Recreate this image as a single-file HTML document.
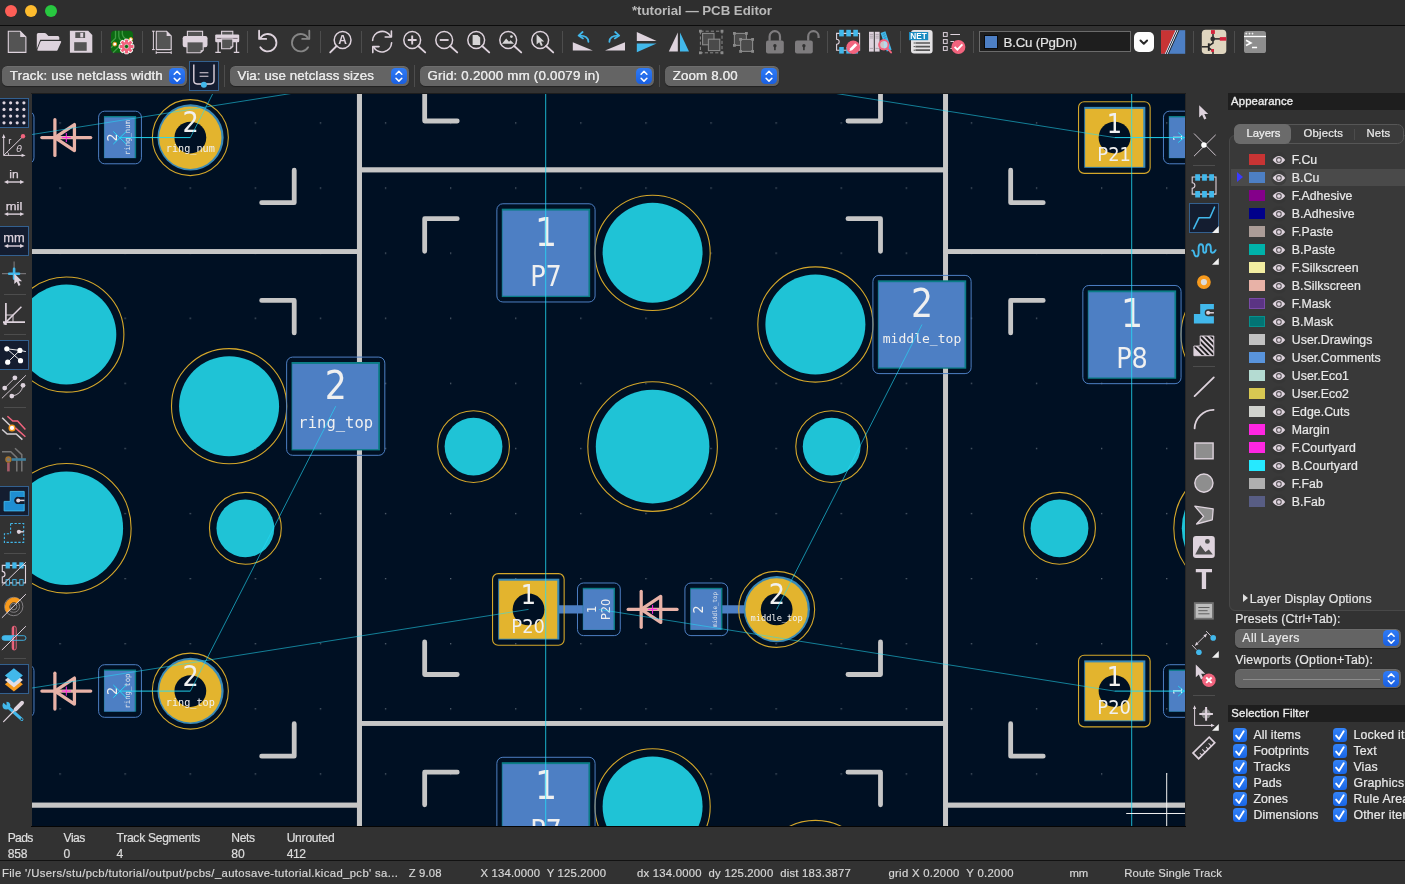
<!DOCTYPE html><html><head><meta charset="utf-8"><title>*tutorial — PCB Editor</title><style>

*{box-sizing:border-box;margin:0;padding:0}
html,body{width:1405px;height:884px;overflow:hidden;background:#323232}
body{position:relative;font-family:"Liberation Sans",sans-serif;-webkit-font-smoothing:antialiased}
.a{position:absolute}
.t{position:absolute;white-space:nowrap;line-height:1;-webkit-text-stroke:0.2px}
#w{position:absolute;left:0;top:0;width:1405px;height:884px;will-change:transform}
svg{position:absolute;overflow:hidden}
.cv{display:block}
.pn{font-family:"DejaVu Sans Condensed","DejaVu Sans","Liberation Sans",sans-serif;font-weight:400;font-stretch:condensed}
.pm{font-family:"DejaVu Sans Mono","Liberation Mono",monospace}
.dd{position:absolute;height:20px;border-radius:5.5px;background:#646464;box-shadow:inset 0 0.5px 0 rgba(255,255,255,.12),0 0.5px 1px rgba(0,0,0,.35)}
.st{position:absolute;width:16px;height:16px;border-radius:4.5px;background:linear-gradient(#2f7bf6,#1a5fe0)}
.sb{-webkit-text-stroke:0.35px}
.mb{-webkit-text-stroke:0.22px}
.sep{position:absolute;width:1px;background:#4d4d4d}
.hsep{position:absolute;height:1px;background:#4d4d4d}
.sel{position:absolute;border:1px solid #33608f;background:#141d30}
.cb{position:absolute;width:14px;height:14px;border-radius:3.5px;background:linear-gradient(#3483f7,#1966e6)}

</style></head><body><div id="w">
<div class="a" style="left:0px;top:0px;width:1405px;height:25px;background:#2e2e2e;"></div>
<div class="a" style="left:0px;top:25px;width:1405px;height:1px;background:#0c0c0c;"></div>
<div class="a" style="left:5px;top:5px;width:12px;height:12px;background:#fe5f57;border-radius:6px"></div>
<div class="a" style="left:25px;top:5px;width:12px;height:12px;background:#febc2e;border-radius:6px"></div>
<div class="a" style="left:45px;top:5px;width:12px;height:12px;background:#28c840;border-radius:6px"></div>
<span class="t " style="left:631.97px;top:3.74px;font-size:13.3px;color:#b9b9b9;font-weight:700;letter-spacing:-0.05px;-webkit-text-stroke:0;">*tutorial — PCB Editor</span>
<div class="a" style="left:0px;top:26px;width:1405px;height:67.6px;background:#323232;"></div>
<div class="sep" style="left:100.7px;top:31.2px;height:21.6px"></div>
<div class="sep" style="left:142.1px;top:31.2px;height:21.6px"></div>
<div class="sep" style="left:246.7px;top:31.2px;height:21.6px"></div>
<div class="sep" style="left:319.8px;top:31.2px;height:21.6px"></div>
<div class="sep" style="left:361px;top:31.2px;height:21.6px"></div>
<div class="sep" style="left:561.8px;top:31.2px;height:21.6px"></div>
<div class="sep" style="left:827px;top:31.2px;height:21.6px"></div>
<div class="sep" style="left:900px;top:31.2px;height:21.6px"></div>
<div class="sep" style="left:973px;top:31.2px;height:21.6px"></div>
<div class="sep" style="left:1193.3px;top:31.2px;height:21.6px"></div>
<div class="sep" style="left:1234.1px;top:31.2px;height:21.6px"></div>
<div class="a" style="left:979px;top:31.4px;width:152px;height:21px;background:#1e1e1e;border:1px solid #6b6b6b"></div>
<div class="a" style="left:984px;top:35.4px;width:14px;height:13.6px;background:#4d7fc4;border:1px solid #0a0a0a"></div>
<span class="t " style="left:1003.47px;top:35.94px;font-size:13.3px;color:#e4e4e4;font-weight:400;letter-spacing:-0.2px;">B.Cu (PgDn)</span>
<div class="a" style="left:1134px;top:32px;width:20px;height:20px;background:#fdfdfd;border-radius:5px"></div>
<div class="dd" style="left:2px;top:66.2px;width:185px"></div>
<div class="st" style="left:169px;top:68.2px"></div>
<span class="t " style="left:9.87px;top:69.04px;font-size:13.3px;color:#e6e6e6;font-weight:400;letter-spacing:0.17px;text-shadow:0 0 0.4px #e6e6e6;">Track: use netclass width</span>
<div class="dd" style="left:230px;top:66.2px;width:178.9px"></div>
<div class="st" style="left:390.9px;top:68.2px"></div>
<span class="t " style="left:237.57px;top:69.04px;font-size:13.3px;color:#e6e6e6;font-weight:400;letter-spacing:0.09px;text-shadow:0 0 0.4px #e6e6e6;">Via: use netclass sizes</span>
<div class="dd" style="left:420px;top:66.2px;width:233.8px"></div>
<div class="st" style="left:635.8px;top:68.2px"></div>
<span class="t " style="left:427.47px;top:69.04px;font-size:13.3px;color:#e6e6e6;font-weight:400;letter-spacing:0.23px;text-shadow:0 0 0.4px #e6e6e6;">Grid: 0.2000 mm (0.0079 in)</span>
<div class="dd" style="left:665px;top:66.2px;width:113.7px"></div>
<div class="st" style="left:760.7px;top:68.2px"></div>
<span class="t " style="left:672.67px;top:69.04px;font-size:13.3px;color:#e6e6e6;font-weight:400;letter-spacing:0.18px;text-shadow:0 0 0.4px #e6e6e6;">Zoom 8.00</span>
<div class="sep" style="left:223.9px;top:65px;height:22px"></div>
<div class="sep" style="left:414.2px;top:65px;height:22px"></div>
<div class="sep" style="left:659.2px;top:65px;height:22px"></div>
<div class="sel" style="left:189.3px;top:61px;width:29.8px;height:29.6px"></div>
<div class="a" style="left:31px;top:92.8px;width:1154.5px;height:1.4px;background:#1d1d1d;"></div>
<div class="a" style="left:0px;top:93.6px;width:32px;height:733px;background:#323232;"></div>
<div class="sel" style="left:-1px;top:98.4px;width:29.9px;height:29.5px"></div>
<div class="sel" style="left:-1px;top:226.3px;width:29.9px;height:29.5px"></div>
<div class="sel" style="left:-1px;top:340.1px;width:29.9px;height:29.7px"></div>
<div class="sel" style="left:-1px;top:486.4px;width:29.9px;height:29.9px"></div>
<div class="sel" style="left:-1px;top:664.1px;width:29.9px;height:29.7px"></div>
<div class="hsep" style="left:4px;top:293.5px;width:22px"></div>
<div class="hsep" style="left:4px;top:333.5px;width:22px"></div>
<div class="hsep" style="left:4px;top:406.5px;width:22px"></div>
<div class="hsep" style="left:4px;top:553px;width:22px"></div>
<div class="hsep" style="left:4px;top:658px;width:22px"></div>
<div class="a" style="left:1185px;top:93.6px;width:220px;height:733px;background:#323232;"></div>
<div class="a" style="left:1185px;top:93.6px;width:1.2px;height:733px;background:#262626;"></div>
<div class="sel" style="left:1189.2px;top:203px;width:29.8px;height:30px"></div>
<div class="hsep" style="left:1193px;top:165px;width:22px"></div>
<div class="hsep" style="left:1193px;top:366px;width:22px"></div>
<div class="hsep" style="left:1193px;top:695px;width:22px"></div>
<div class="a" style="left:1228.4px;top:93.6px;width:177px;height:733px;background:#323232;"></div>
<div class="a" style="left:1228.4px;top:93.2px;width:177px;height:16.6px;background:#1e1e1e;"></div>
<span class="t sb" style="left:1231.11px;top:96.23px;font-size:11.3px;color:#ececec;font-weight:400;letter-spacing:0.11px;">Appearance</span>
<div class="a" style="left:1228.9px;top:134.5px;width:190px;height:476px;background:#393939;border:1px solid #484848;border-radius:6px"></div>
<div class="a" style="left:1233.7px;top:123.6px;width:170px;height:20.8px;background:#3b3b3b;border:1px solid #565656;border-radius:6.5px"></div>
<div class="a" style="left:1234.2px;top:124px;width:56.8px;height:20px;background:#6b6b6b;border-radius:6px"></div>
<div class="a" style="left:1354px;top:128.5px;width:1px;height:11.5px;background:#4c4c4c;"></div>
<span class="t mb" style="left:1246.41px;top:128.43px;font-size:11.3px;color:#f0f0f0;font-weight:400;letter-spacing:0.01px;">Layers</span>
<span class="t mb" style="left:1303.51px;top:128.43px;font-size:11.3px;color:#e8e8e8;font-weight:400;letter-spacing:0.2px;">Objects</span>
<span class="t mb" style="left:1366.41px;top:128.43px;font-size:11.3px;color:#e8e8e8;font-weight:400;letter-spacing:0.19px;">Nets</span>
<div class="a" style="left:1231px;top:169px;width:174px;height:16.6px;background:#4a4a4a;"></div>
<div class="a" style="left:1237px;top:172.2px;width:0;height:0;border-left:6.5px solid #3a3aff;border-top:5.3px solid transparent;border-bottom:5.3px solid transparent"></div>
<div class="a" style="left:1249.2px;top:154.4px;width:15.8px;height:11px;background:#c83434;"></div>
<span class="t mb" style="left:1291.74px;top:153.79px;font-size:12.3px;color:#e8e8e8;font-weight:400;letter-spacing:0.06px;">F.Cu</span>
<div class="a" style="left:1249.2px;top:172.4px;width:15.8px;height:11px;background:#4d7fc4;"></div>
<span class="t mb" style="left:1291.74px;top:171.79px;font-size:12.3px;color:#e8e8e8;font-weight:400;letter-spacing:0.07px;">B.Cu</span>
<div class="a" style="left:1249.2px;top:190.4px;width:15.8px;height:11px;background:#84008a;"></div>
<span class="t mb" style="left:1291.74px;top:189.79px;font-size:12.3px;color:#e8e8e8;font-weight:400;letter-spacing:0.06px;">F.Adhesive</span>
<div class="a" style="left:1249.2px;top:208.4px;width:15.8px;height:11px;background:#00008a;"></div>
<span class="t mb" style="left:1291.74px;top:207.79px;font-size:12.3px;color:#e8e8e8;font-weight:400;letter-spacing:0.06px;">B.Adhesive</span>
<div class="a" style="left:1249.2px;top:226.4px;width:15.8px;height:11px;background:#ab9c97;"></div>
<span class="t mb" style="left:1291.74px;top:225.79px;font-size:12.3px;color:#e8e8e8;font-weight:400;letter-spacing:0.06px;">F.Paste</span>
<div class="a" style="left:1249.2px;top:244.4px;width:15.8px;height:11px;background:#00b2aa;"></div>
<span class="t mb" style="left:1291.74px;top:243.79px;font-size:12.3px;color:#e8e8e8;font-weight:400;letter-spacing:0.06px;">B.Paste</span>
<div class="a" style="left:1249.2px;top:262.4px;width:15.8px;height:11px;background:#f2eda1;"></div>
<span class="t mb" style="left:1291.74px;top:261.79px;font-size:12.3px;color:#e8e8e8;font-weight:400;letter-spacing:0.05px;">F.Silkscreen</span>
<div class="a" style="left:1249.2px;top:280.4px;width:15.8px;height:11px;background:#e8b2a7;"></div>
<span class="t mb" style="left:1291.74px;top:279.79px;font-size:12.3px;color:#e8e8e8;font-weight:400;letter-spacing:0.06px;">B.Silkscreen</span>
<div class="a" style="left:1249.2px;top:298.4px;width:15.8px;height:11px;background:#5b3484;border:1px solid #7a4aa8"></div>
<span class="t mb" style="left:1291.74px;top:297.79px;font-size:12.3px;color:#e8e8e8;font-weight:400;letter-spacing:0.06px;">F.Mask</span>
<div class="a" style="left:1249.2px;top:316.4px;width:15.8px;height:11px;background:#027474;border:1px solid #06908c"></div>
<span class="t mb" style="left:1291.74px;top:315.79px;font-size:12.3px;color:#e8e8e8;font-weight:400;letter-spacing:0.07px;">B.Mask</span>
<div class="a" style="left:1249.2px;top:334.4px;width:15.8px;height:11px;background:#c2c2c2;"></div>
<span class="t mb" style="left:1291.74px;top:333.79px;font-size:12.3px;color:#e8e8e8;font-weight:400;letter-spacing:0.06px;">User.Drawings</span>
<div class="a" style="left:1249.2px;top:352.4px;width:15.8px;height:11px;background:#5994dc;"></div>
<span class="t mb" style="left:1291.74px;top:351.79px;font-size:12.3px;color:#e8e8e8;font-weight:400;letter-spacing:0.07px;">User.Comments</span>
<div class="a" style="left:1249.2px;top:370.4px;width:15.8px;height:11px;background:#b4dbd2;"></div>
<span class="t mb" style="left:1291.74px;top:369.79px;font-size:12.3px;color:#e8e8e8;font-weight:400;letter-spacing:0.06px;">User.Eco1</span>
<div class="a" style="left:1249.2px;top:388.4px;width:15.8px;height:11px;background:#d8c852;"></div>
<span class="t mb" style="left:1291.74px;top:387.79px;font-size:12.3px;color:#e8e8e8;font-weight:400;letter-spacing:0.06px;">User.Eco2</span>
<div class="a" style="left:1249.2px;top:406.4px;width:15.8px;height:11px;background:#d0d2cd;"></div>
<span class="t mb" style="left:1291.74px;top:405.79px;font-size:12.3px;color:#e8e8e8;font-weight:400;letter-spacing:0.06px;">Edge.Cuts</span>
<div class="a" style="left:1249.2px;top:424.4px;width:15.8px;height:11px;background:#ff26e2;"></div>
<span class="t mb" style="left:1291.74px;top:423.79px;font-size:12.3px;color:#e8e8e8;font-weight:400;letter-spacing:0.06px;">Margin</span>
<div class="a" style="left:1249.2px;top:442.4px;width:15.8px;height:11px;background:#ff26e2;"></div>
<span class="t mb" style="left:1291.74px;top:441.79px;font-size:12.3px;color:#e8e8e8;font-weight:400;letter-spacing:0.06px;">F.Courtyard</span>
<div class="a" style="left:1249.2px;top:460.4px;width:15.8px;height:11px;background:#26e9ff;"></div>
<span class="t mb" style="left:1291.74px;top:459.79px;font-size:12.3px;color:#e8e8e8;font-weight:400;letter-spacing:0.06px;">B.Courtyard</span>
<div class="a" style="left:1249.2px;top:478.4px;width:15.8px;height:11px;background:#afafaf;"></div>
<span class="t mb" style="left:1291.74px;top:477.79px;font-size:12.3px;color:#e8e8e8;font-weight:400;letter-spacing:0.06px;">F.Fab</span>
<div class="a" style="left:1249.2px;top:496.4px;width:15.8px;height:11px;background:#585d84;"></div>
<span class="t mb" style="left:1291.74px;top:495.79px;font-size:12.3px;color:#e8e8e8;font-weight:400;letter-spacing:0.06px;">B.Fab</span>
<div class="a" style="left:1243.4px;top:594.3px;width:0;height:0;border-left:5px solid #e0e0e0;border-top:4.2px solid transparent;border-bottom:4.2px solid transparent"></div>
<span class="t " style="left:1249.74px;top:593.39px;font-size:12.3px;color:#e6e6e6;font-weight:400;letter-spacing:0.08px;">Layer Display Options</span>
<span class="t " style="left:1235.14px;top:613.19px;font-size:12.3px;color:#e6e6e6;font-weight:400;letter-spacing:0.14px;">Presets (Ctrl+Tab):</span>
<div class="dd" style="left:1235.3px;top:628.6px;width:165.4px;height:19px"></div>
<div class="st" style="left:1383.2px;top:630.2px"></div>
<span class="t " style="left:1242.34px;top:631.99px;font-size:12.3px;color:#e8e8e8;font-weight:400;letter-spacing:0.35px;">All Layers</span>
<span class="t " style="left:1235.14px;top:654.39px;font-size:12.3px;color:#e6e6e6;font-weight:400;letter-spacing:0.26px;">Viewports (Option+Tab):</span>
<div class="dd" style="left:1235.3px;top:669.2px;width:165.4px;height:19px"></div>
<div class="st" style="left:1383.2px;top:670.8px"></div>
<div class="a" style="left:1243px;top:678.6px;width:136.5px;height:1px;background:#8c8c8c;"></div>
<div class="a" style="left:1228.4px;top:705.2px;width:177px;height:16.6px;background:#1e1e1e;"></div>
<span class="t sb" style="left:1231.21px;top:708.03px;font-size:11.3px;color:#ececec;font-weight:400;letter-spacing:0.2px;">Selection Filter</span>
<div class="cb" style="left:1233.1px;top:728px"></div>
<div class="cb" style="left:1333.1px;top:728px"></div>
<span class="t mb" style="left:1253.44px;top:728.69px;font-size:12.3px;color:#e8e8e8;font-weight:400;letter-spacing:0.08px;">All items</span>
<span class="t mb" style="left:1353.44px;top:728.69px;font-size:12.3px;color:#e8e8e8;font-weight:400;letter-spacing:0.21px;">Locked items</span>
<div class="cb" style="left:1233.1px;top:744px"></div>
<div class="cb" style="left:1333.1px;top:744px"></div>
<span class="t mb" style="left:1253.44px;top:744.69px;font-size:12.3px;color:#e8e8e8;font-weight:400;letter-spacing:0.08px;">Footprints</span>
<span class="t mb" style="left:1353.44px;top:744.69px;font-size:12.3px;color:#e8e8e8;font-weight:400;letter-spacing:0.19px;">Text</span>
<div class="cb" style="left:1233.1px;top:760px"></div>
<div class="cb" style="left:1333.1px;top:760px"></div>
<span class="t mb" style="left:1253.44px;top:760.69px;font-size:12.3px;color:#e8e8e8;font-weight:400;letter-spacing:0.09px;">Tracks</span>
<span class="t mb" style="left:1353.44px;top:760.69px;font-size:12.3px;color:#e8e8e8;font-weight:400;letter-spacing:0.2px;">Vias</span>
<div class="cb" style="left:1233.1px;top:776px"></div>
<div class="cb" style="left:1333.1px;top:776px"></div>
<span class="t mb" style="left:1253.44px;top:776.69px;font-size:12.3px;color:#e8e8e8;font-weight:400;letter-spacing:0.1px;">Pads</span>
<span class="t mb" style="left:1353.44px;top:776.69px;font-size:12.3px;color:#e8e8e8;font-weight:400;letter-spacing:0.21px;">Graphics</span>
<div class="cb" style="left:1233.1px;top:792px"></div>
<div class="cb" style="left:1333.1px;top:792px"></div>
<span class="t mb" style="left:1253.44px;top:792.69px;font-size:12.3px;color:#e8e8e8;font-weight:400;letter-spacing:0.1px;">Zones</span>
<span class="t mb" style="left:1353.44px;top:792.69px;font-size:12.3px;color:#e8e8e8;font-weight:400;letter-spacing:0.21px;">Rule Areas</span>
<div class="cb" style="left:1233.1px;top:808px"></div>
<div class="cb" style="left:1333.1px;top:808px"></div>
<span class="t mb" style="left:1253.44px;top:808.69px;font-size:12.3px;color:#e8e8e8;font-weight:400;letter-spacing:0.09px;">Dimensions</span>
<span class="t mb" style="left:1353.44px;top:808.69px;font-size:12.3px;color:#e8e8e8;font-weight:400;letter-spacing:0.2px;">Other items</span>
<div class="a" style="left:0px;top:826px;width:1405px;height:58px;background:#323232;"></div>
<div class="a" style="left:31px;top:826px;width:1154.5px;height:1.2px;background:#050505;"></div>
<div class="a" style="left:0px;top:860px;width:1405px;height:1.2px;background:#121212;"></div>
<div class="a" style="left:0px;top:861.2px;width:1405px;height:22.8px;background:#323232;"></div>
<span class="t " style="left:7.65px;top:832.16px;font-size:12.1px;color:#dedede;font-weight:400;letter-spacing:-0.64px;">Pads</span>
<span class="t " style="left:7.65px;top:847.76px;font-size:12.1px;color:#dedede;font-weight:400;letter-spacing:-0.2px;">858</span>
<span class="t " style="left:63.55px;top:832.16px;font-size:12.1px;color:#dedede;font-weight:400;letter-spacing:-0.48px;">Vias</span>
<span class="t " style="left:63.55px;top:847.76px;font-size:12.1px;color:#dedede;font-weight:400;letter-spacing:-0.53px;">0</span>
<span class="t " style="left:116.55px;top:832.16px;font-size:12.1px;color:#dedede;font-weight:400;letter-spacing:-0.29px;">Track Segments</span>
<span class="t " style="left:116.55px;top:847.76px;font-size:12.1px;color:#dedede;font-weight:400;letter-spacing:-0.43px;">4</span>
<span class="t " style="left:231.35px;top:832.16px;font-size:12.1px;color:#dedede;font-weight:400;letter-spacing:-0.37px;">Nets</span>
<span class="t " style="left:231.35px;top:847.76px;font-size:12.1px;color:#dedede;font-weight:400;letter-spacing:-0.03px;">80</span>
<span class="t " style="left:286.65px;top:832.16px;font-size:12.1px;color:#dedede;font-weight:400;letter-spacing:-0.25px;">Unrouted</span>
<span class="t " style="left:286.65px;top:847.76px;font-size:12.1px;color:#dedede;font-weight:400;letter-spacing:-0.43px;">412</span>
<span class="t " style="left:1.91px;top:868.43px;font-size:11.3px;color:#d6d6d6;font-weight:400;letter-spacing:0.37px;white-space:pre;">File '/Users/stu/pcb/tutorial/output/pcbs/_autosave-tutorial.kicad_pcb' sa...</span>
<span class="t " style="left:408.81px;top:868.43px;font-size:11.3px;color:#d6d6d6;font-weight:400;letter-spacing:0.14px;white-space:pre;">Z 9.08</span>
<span class="t " style="left:480.51px;top:868.43px;font-size:11.3px;color:#d6d6d6;font-weight:400;letter-spacing:0.19px;white-space:pre;">X 134.0000  Y 125.2000</span>
<span class="t " style="left:637.01px;top:868.43px;font-size:11.3px;color:#d6d6d6;font-weight:400;letter-spacing:0.24px;white-space:pre;">dx 134.0000  dy 125.2000  dist 183.3877</span>
<span class="t " style="left:888.41px;top:868.43px;font-size:11.3px;color:#d6d6d6;font-weight:400;letter-spacing:0.31px;white-space:pre;">grid X 0.2000  Y 0.2000</span>
<span class="t " style="left:1069.51px;top:868.43px;font-size:11.3px;color:#d6d6d6;font-weight:400;letter-spacing:-0.11px;white-space:pre;">mm</span>
<span class="t " style="left:1124.21px;top:868.43px;font-size:11.3px;color:#d6d6d6;font-weight:400;letter-spacing:0.13px;white-space:pre;">Route Single Track</span>
<svg class="cv" style="left:31.8px;top:94px" width="1153.2" height="732" viewBox="31.8 94 1153.2 732">
<defs><pattern id="gd" x="59.2" y="57.2" width="65.1" height="65.1" patternUnits="userSpaceOnUse"><rect x="0" y="0" width="1.3" height="1.3" fill="#566270"/></pattern></defs>
<rect x="0" y="0" width="1405" height="884" fill="#001023"/>
<rect x="0" y="0" width="1405" height="884" fill="url(#gd)"/>
<g fill="none" stroke="#c6c6c6" stroke-width="4.8" stroke-linecap="round" stroke-linejoin="round">
<rect x="-226.94" y="-301.98" width="586.08" height="553.52"/>
<path d="M-129.26 -253.14L-161.82 -253.14L-161.82 -220.58"/>
<path d="M-129.26 202.7L-161.82 202.7L-161.82 170.14"/>
<path d="M261.46 -253.14L294.02 -253.14L294.02 -220.58"/>
<path d="M261.46 202.7L294.02 202.7L294.02 170.14"/>
<rect x="-226.94" y="251.54" width="586.08" height="553.52"/>
<path d="M-129.26 300.38L-161.82 300.38L-161.82 332.94"/>
<path d="M-129.26 756.22L-161.82 756.22L-161.82 723.66"/>
<path d="M261.46 300.38L294.02 300.38L294.02 332.94"/>
<path d="M261.46 756.22L294.02 756.22L294.02 723.66"/>
<rect x="-226.94" y="805.06" width="586.08" height="553.52"/>
<path d="M-129.26 853.9L-161.82 853.9L-161.82 886.46"/>
<path d="M-129.26 1309.74L-161.82 1309.74L-161.82 1277.18"/>
<path d="M261.46 853.9L294.02 853.9L294.02 886.46"/>
<path d="M261.46 1309.74L294.02 1309.74L294.02 1277.18"/>
<rect x="359.36" y="-383.68" width="586.08" height="553.52"/>
<path d="M457.04 -334.84L424.48 -334.84L424.48 -302.28"/>
<path d="M457.04 121L424.48 121L424.48 88.44"/>
<path d="M847.76 -334.84L880.32 -334.84L880.32 -302.28"/>
<path d="M847.76 121L880.32 121L880.32 88.44"/>
<rect x="359.36" y="169.84" width="586.08" height="553.52"/>
<path d="M457.04 218.68L424.48 218.68L424.48 251.24"/>
<path d="M457.04 674.52L424.48 674.52L424.48 641.96"/>
<path d="M847.76 218.68L880.32 218.68L880.32 251.24"/>
<path d="M847.76 674.52L880.32 674.52L880.32 641.96"/>
<rect x="359.36" y="723.36" width="586.08" height="553.52"/>
<path d="M457.04 772.2L424.48 772.2L424.48 804.76"/>
<path d="M457.04 1228.04L424.48 1228.04L424.48 1195.48"/>
<path d="M847.76 772.2L880.32 772.2L880.32 804.76"/>
<path d="M847.76 1228.04L880.32 1228.04L880.32 1195.48"/>
<rect x="945.36" y="-301.98" width="586.08" height="553.52"/>
<path d="M1043.04 -253.14L1010.48 -253.14L1010.48 -220.58"/>
<path d="M1043.04 202.7L1010.48 202.7L1010.48 170.14"/>
<path d="M1433.76 -253.14L1466.32 -253.14L1466.32 -220.58"/>
<path d="M1433.76 202.7L1466.32 202.7L1466.32 170.14"/>
<rect x="945.36" y="251.54" width="586.08" height="553.52"/>
<path d="M1043.04 300.38L1010.48 300.38L1010.48 332.94"/>
<path d="M1043.04 756.22L1010.48 756.22L1010.48 723.66"/>
<path d="M1433.76 300.38L1466.32 300.38L1466.32 332.94"/>
<path d="M1433.76 756.22L1466.32 756.22L1466.32 723.66"/>
<rect x="945.36" y="805.06" width="586.08" height="553.52"/>
<path d="M1043.04 853.9L1010.48 853.9L1010.48 886.46"/>
<path d="M1043.04 1309.74L1010.48 1309.74L1010.48 1277.18"/>
<path d="M1433.76 853.9L1466.32 853.9L1466.32 886.46"/>
<path d="M1433.76 1309.74L1466.32 1309.74L1466.32 1277.18"/>
</g>
<circle cx="66.1" cy="-25.22" r="56.8" fill="#1fc3d6"/><circle cx="66.1" cy="-25.22" r="64.8" fill="none" stroke="#d4a72a" stroke-width="1.1"/>
<circle cx="-112.98" cy="-25.22" r="28.9" fill="#1fc3d6"/><circle cx="-112.98" cy="-25.22" r="35.9" fill="none" stroke="#d4a72a" stroke-width="1.1"/>
<circle cx="245.18" cy="-25.22" r="28.9" fill="#1fc3d6"/><circle cx="245.18" cy="-25.22" r="35.9" fill="none" stroke="#d4a72a" stroke-width="1.1"/>
<circle cx="66.1" cy="-218.95" r="50" fill="#1fc3d6"/><circle cx="66.1" cy="-218.95" r="57.6" fill="none" stroke="#d4a72a" stroke-width="1.1"/>
<circle cx="228.9" cy="-147.32" r="50" fill="#1fc3d6"/><circle cx="228.9" cy="-147.32" r="57.6" fill="none" stroke="#d4a72a" stroke-width="1.1"/>
<circle cx="66.1" cy="528.3" r="56.8" fill="#1fc3d6"/><circle cx="66.1" cy="528.3" r="64.8" fill="none" stroke="#d4a72a" stroke-width="1.1"/>
<circle cx="-112.98" cy="528.3" r="28.9" fill="#1fc3d6"/><circle cx="-112.98" cy="528.3" r="35.9" fill="none" stroke="#d4a72a" stroke-width="1.1"/>
<circle cx="245.18" cy="528.3" r="28.9" fill="#1fc3d6"/><circle cx="245.18" cy="528.3" r="35.9" fill="none" stroke="#d4a72a" stroke-width="1.1"/>
<circle cx="66.1" cy="334.57" r="50" fill="#1fc3d6"/><circle cx="66.1" cy="334.57" r="57.6" fill="none" stroke="#d4a72a" stroke-width="1.1"/>
<circle cx="228.9" cy="406.2" r="50" fill="#1fc3d6"/><circle cx="228.9" cy="406.2" r="57.6" fill="none" stroke="#d4a72a" stroke-width="1.1"/>
<circle cx="66.1" cy="1081.82" r="56.8" fill="#1fc3d6"/><circle cx="66.1" cy="1081.82" r="64.8" fill="none" stroke="#d4a72a" stroke-width="1.1"/>
<circle cx="-112.98" cy="1081.82" r="28.9" fill="#1fc3d6"/><circle cx="-112.98" cy="1081.82" r="35.9" fill="none" stroke="#d4a72a" stroke-width="1.1"/>
<circle cx="245.18" cy="1081.82" r="28.9" fill="#1fc3d6"/><circle cx="245.18" cy="1081.82" r="35.9" fill="none" stroke="#d4a72a" stroke-width="1.1"/>
<circle cx="66.1" cy="888.09" r="50" fill="#1fc3d6"/><circle cx="66.1" cy="888.09" r="57.6" fill="none" stroke="#d4a72a" stroke-width="1.1"/>
<circle cx="228.9" cy="959.72" r="50" fill="#1fc3d6"/><circle cx="228.9" cy="959.72" r="57.6" fill="none" stroke="#d4a72a" stroke-width="1.1"/>
<circle cx="652.4" cy="-106.92" r="56.8" fill="#1fc3d6"/><circle cx="652.4" cy="-106.92" r="64.8" fill="none" stroke="#d4a72a" stroke-width="1.1"/>
<circle cx="473.32" cy="-106.92" r="28.9" fill="#1fc3d6"/><circle cx="473.32" cy="-106.92" r="35.9" fill="none" stroke="#d4a72a" stroke-width="1.1"/>
<circle cx="831.48" cy="-106.92" r="28.9" fill="#1fc3d6"/><circle cx="831.48" cy="-106.92" r="35.9" fill="none" stroke="#d4a72a" stroke-width="1.1"/>
<circle cx="652.4" cy="-300.65" r="50" fill="#1fc3d6"/><circle cx="652.4" cy="-300.65" r="57.6" fill="none" stroke="#d4a72a" stroke-width="1.1"/>
<circle cx="815.2" cy="-229.02" r="50" fill="#1fc3d6"/><circle cx="815.2" cy="-229.02" r="57.6" fill="none" stroke="#d4a72a" stroke-width="1.1"/>
<circle cx="652.4" cy="446.6" r="56.8" fill="#1fc3d6"/><circle cx="652.4" cy="446.6" r="64.8" fill="none" stroke="#d4a72a" stroke-width="1.1"/>
<circle cx="473.32" cy="446.6" r="28.9" fill="#1fc3d6"/><circle cx="473.32" cy="446.6" r="35.9" fill="none" stroke="#d4a72a" stroke-width="1.1"/>
<circle cx="831.48" cy="446.6" r="28.9" fill="#1fc3d6"/><circle cx="831.48" cy="446.6" r="35.9" fill="none" stroke="#d4a72a" stroke-width="1.1"/>
<circle cx="652.4" cy="252.87" r="50" fill="#1fc3d6"/><circle cx="652.4" cy="252.87" r="57.6" fill="none" stroke="#d4a72a" stroke-width="1.1"/>
<circle cx="815.2" cy="324.5" r="50" fill="#1fc3d6"/><circle cx="815.2" cy="324.5" r="57.6" fill="none" stroke="#d4a72a" stroke-width="1.1"/>
<circle cx="652.4" cy="1000.12" r="56.8" fill="#1fc3d6"/><circle cx="652.4" cy="1000.12" r="64.8" fill="none" stroke="#d4a72a" stroke-width="1.1"/>
<circle cx="473.32" cy="1000.12" r="28.9" fill="#1fc3d6"/><circle cx="473.32" cy="1000.12" r="35.9" fill="none" stroke="#d4a72a" stroke-width="1.1"/>
<circle cx="831.48" cy="1000.12" r="28.9" fill="#1fc3d6"/><circle cx="831.48" cy="1000.12" r="35.9" fill="none" stroke="#d4a72a" stroke-width="1.1"/>
<circle cx="652.4" cy="806.39" r="50" fill="#1fc3d6"/><circle cx="652.4" cy="806.39" r="57.6" fill="none" stroke="#d4a72a" stroke-width="1.1"/>
<circle cx="815.2" cy="878.02" r="50" fill="#1fc3d6"/><circle cx="815.2" cy="878.02" r="57.6" fill="none" stroke="#d4a72a" stroke-width="1.1"/>
<circle cx="1238.4" cy="-25.22" r="56.8" fill="#1fc3d6"/><circle cx="1238.4" cy="-25.22" r="64.8" fill="none" stroke="#d4a72a" stroke-width="1.1"/>
<circle cx="1059.32" cy="-25.22" r="28.9" fill="#1fc3d6"/><circle cx="1059.32" cy="-25.22" r="35.9" fill="none" stroke="#d4a72a" stroke-width="1.1"/>
<circle cx="1417.48" cy="-25.22" r="28.9" fill="#1fc3d6"/><circle cx="1417.48" cy="-25.22" r="35.9" fill="none" stroke="#d4a72a" stroke-width="1.1"/>
<circle cx="1238.4" cy="-218.95" r="50" fill="#1fc3d6"/><circle cx="1238.4" cy="-218.95" r="57.6" fill="none" stroke="#d4a72a" stroke-width="1.1"/>
<circle cx="1401.2" cy="-147.32" r="50" fill="#1fc3d6"/><circle cx="1401.2" cy="-147.32" r="57.6" fill="none" stroke="#d4a72a" stroke-width="1.1"/>
<circle cx="1238.4" cy="528.3" r="56.8" fill="#1fc3d6"/><circle cx="1238.4" cy="528.3" r="64.8" fill="none" stroke="#d4a72a" stroke-width="1.1"/>
<circle cx="1059.32" cy="528.3" r="28.9" fill="#1fc3d6"/><circle cx="1059.32" cy="528.3" r="35.9" fill="none" stroke="#d4a72a" stroke-width="1.1"/>
<circle cx="1417.48" cy="528.3" r="28.9" fill="#1fc3d6"/><circle cx="1417.48" cy="528.3" r="35.9" fill="none" stroke="#d4a72a" stroke-width="1.1"/>
<circle cx="1238.4" cy="334.57" r="50" fill="#1fc3d6"/><circle cx="1238.4" cy="334.57" r="57.6" fill="none" stroke="#d4a72a" stroke-width="1.1"/>
<circle cx="1401.2" cy="406.2" r="50" fill="#1fc3d6"/><circle cx="1401.2" cy="406.2" r="57.6" fill="none" stroke="#d4a72a" stroke-width="1.1"/>
<circle cx="1238.4" cy="1081.82" r="56.8" fill="#1fc3d6"/><circle cx="1238.4" cy="1081.82" r="64.8" fill="none" stroke="#d4a72a" stroke-width="1.1"/>
<circle cx="1059.32" cy="1081.82" r="28.9" fill="#1fc3d6"/><circle cx="1059.32" cy="1081.82" r="35.9" fill="none" stroke="#d4a72a" stroke-width="1.1"/>
<circle cx="1417.48" cy="1081.82" r="28.9" fill="#1fc3d6"/><circle cx="1417.48" cy="1081.82" r="35.9" fill="none" stroke="#d4a72a" stroke-width="1.1"/>
<circle cx="1238.4" cy="888.09" r="50" fill="#1fc3d6"/><circle cx="1238.4" cy="888.09" r="57.6" fill="none" stroke="#d4a72a" stroke-width="1.1"/>
<circle cx="1401.2" cy="959.72" r="50" fill="#1fc3d6"/><circle cx="1401.2" cy="959.72" r="57.6" fill="none" stroke="#d4a72a" stroke-width="1.1"/>
<rect x="-89.63" y="-268.05" width="98.2" height="98.2" rx="6" fill="none" stroke="#4d7fc4" stroke-width="1"/>
<rect x="-84.73" y="-263.15" width="88.4" height="88.4" fill="#0b7d86"/>
<rect x="-83.93" y="-261.25" width="85.9" height="85.2" fill="#4d7fc4"/>
<rect x="286.43" y="-196.42" width="98.2" height="98.2" rx="6" fill="none" stroke="#4d7fc4" stroke-width="1"/>
<rect x="291.33" y="-191.52" width="88.4" height="88.4" fill="#0b7d86"/>
<rect x="292.13" y="-189.62" width="85.9" height="85.2" fill="#4d7fc4"/>
<rect x="-89.63" y="285.47" width="98.2" height="98.2" rx="6" fill="none" stroke="#4d7fc4" stroke-width="1"/>
<rect x="-84.73" y="290.37" width="88.4" height="88.4" fill="#0b7d86"/>
<rect x="-83.93" y="292.27" width="85.9" height="85.2" fill="#4d7fc4"/>
<rect x="286.43" y="357.1" width="98.2" height="98.2" rx="6" fill="none" stroke="#4d7fc4" stroke-width="1"/>
<rect x="291.33" y="362" width="88.4" height="88.4" fill="#0b7d86"/>
<rect x="292.13" y="363.9" width="85.9" height="85.2" fill="#4d7fc4"/>
<rect x="-89.63" y="838.99" width="98.2" height="98.2" rx="6" fill="none" stroke="#4d7fc4" stroke-width="1"/>
<rect x="-84.73" y="843.89" width="88.4" height="88.4" fill="#0b7d86"/>
<rect x="-83.93" y="845.79" width="85.9" height="85.2" fill="#4d7fc4"/>
<rect x="286.43" y="910.62" width="98.2" height="98.2" rx="6" fill="none" stroke="#4d7fc4" stroke-width="1"/>
<rect x="291.33" y="915.52" width="88.4" height="88.4" fill="#0b7d86"/>
<rect x="292.13" y="917.42" width="85.9" height="85.2" fill="#4d7fc4"/>
<rect x="496.67" y="-349.75" width="98.2" height="98.2" rx="6" fill="none" stroke="#4d7fc4" stroke-width="1"/>
<rect x="501.57" y="-344.85" width="88.4" height="88.4" fill="#0b7d86"/>
<rect x="502.37" y="-342.95" width="85.9" height="85.2" fill="#4d7fc4"/>
<rect x="872.73" y="-278.12" width="98.2" height="98.2" rx="6" fill="none" stroke="#4d7fc4" stroke-width="1"/>
<rect x="877.63" y="-273.22" width="88.4" height="88.4" fill="#0b7d86"/>
<rect x="878.43" y="-271.32" width="85.9" height="85.2" fill="#4d7fc4"/>
<rect x="496.67" y="203.77" width="98.2" height="98.2" rx="6" fill="none" stroke="#4d7fc4" stroke-width="1"/>
<rect x="501.57" y="208.67" width="88.4" height="88.4" fill="#0b7d86"/>
<rect x="502.37" y="210.57" width="85.9" height="85.2" fill="#4d7fc4"/>
<rect x="872.73" y="275.4" width="98.2" height="98.2" rx="6" fill="none" stroke="#4d7fc4" stroke-width="1"/>
<rect x="877.63" y="280.3" width="88.4" height="88.4" fill="#0b7d86"/>
<rect x="878.43" y="282.2" width="85.9" height="85.2" fill="#4d7fc4"/>
<rect x="496.67" y="757.29" width="98.2" height="98.2" rx="6" fill="none" stroke="#4d7fc4" stroke-width="1"/>
<rect x="501.57" y="762.19" width="88.4" height="88.4" fill="#0b7d86"/>
<rect x="502.37" y="764.09" width="85.9" height="85.2" fill="#4d7fc4"/>
<rect x="872.73" y="828.92" width="98.2" height="98.2" rx="6" fill="none" stroke="#4d7fc4" stroke-width="1"/>
<rect x="877.63" y="833.82" width="88.4" height="88.4" fill="#0b7d86"/>
<rect x="878.43" y="835.72" width="85.9" height="85.2" fill="#4d7fc4"/>
<rect x="1082.67" y="-268.05" width="98.2" height="98.2" rx="6" fill="none" stroke="#4d7fc4" stroke-width="1"/>
<rect x="1087.57" y="-263.15" width="88.4" height="88.4" fill="#0b7d86"/>
<rect x="1088.37" y="-261.25" width="85.9" height="85.2" fill="#4d7fc4"/>
<rect x="1458.73" y="-196.42" width="98.2" height="98.2" rx="6" fill="none" stroke="#4d7fc4" stroke-width="1"/>
<rect x="1463.63" y="-191.52" width="88.4" height="88.4" fill="#0b7d86"/>
<rect x="1464.43" y="-189.62" width="85.9" height="85.2" fill="#4d7fc4"/>
<rect x="1082.67" y="285.47" width="98.2" height="98.2" rx="6" fill="none" stroke="#4d7fc4" stroke-width="1"/>
<rect x="1087.57" y="290.37" width="88.4" height="88.4" fill="#0b7d86"/>
<rect x="1088.37" y="292.27" width="85.9" height="85.2" fill="#4d7fc4"/>
<rect x="1458.73" y="357.1" width="98.2" height="98.2" rx="6" fill="none" stroke="#4d7fc4" stroke-width="1"/>
<rect x="1463.63" y="362" width="88.4" height="88.4" fill="#0b7d86"/>
<rect x="1464.43" y="363.9" width="85.9" height="85.2" fill="#4d7fc4"/>
<rect x="1082.67" y="838.99" width="98.2" height="98.2" rx="6" fill="none" stroke="#4d7fc4" stroke-width="1"/>
<rect x="1087.57" y="843.89" width="88.4" height="88.4" fill="#0b7d86"/>
<rect x="1088.37" y="845.79" width="85.9" height="85.2" fill="#4d7fc4"/>
<rect x="1458.73" y="910.62" width="98.2" height="98.2" rx="6" fill="none" stroke="#4d7fc4" stroke-width="1"/>
<rect x="1463.63" y="915.52" width="88.4" height="88.4" fill="#0b7d86"/>
<rect x="1464.43" y="917.42" width="85.9" height="85.2" fill="#4d7fc4"/>
<g fill="none" stroke="#e8b2a7" stroke-width="3.26" stroke-linecap="round" stroke-linejoin="round">
<path d="M41.68 137.58L90.52 137.58"/>
<path d="M54.7 119.67L54.7 155.49"/>
<path d="M54.7 137.58L74.24 124.56L74.24 150.6Z"/>
</g>
<path d="M61.6 137.58h9M66.1 133.08v9" stroke="#ff26e2" stroke-width="1" fill="none"/>
<rect x="-9.02" y="111.18" width="42.8" height="52.6" rx="6" fill="none" stroke="#4d7fc4" stroke-width="1"/>
<rect x="-3.72" y="115.98" width="32.2" height="42.2" fill="#0b7d86"/>
<rect x="-3.32" y="117.38" width="30.4" height="40.6" fill="#4d7fc4"/>
<rect x="98.42" y="111.18" width="42.8" height="52.6" rx="6" fill="none" stroke="#4d7fc4" stroke-width="1"/>
<rect x="103.72" y="115.98" width="32.2" height="42.2" fill="#0b7d86"/>
<rect x="104.12" y="117.38" width="30.4" height="40.6" fill="#4d7fc4"/>
<rect x="-93.95" y="101.78" width="71.6" height="71.6" rx="5.6" fill="none" stroke="#d4a72a" stroke-width="1.1"/>
<rect x="-88.25" y="106.88" width="61.1" height="60.9" fill="#3a8ab8"/>
<rect x="-87.35" y="108.88" width="58.1" height="58" fill="#e3b42e"/>
<circle cx="-57.95" cy="137.58" r="15.9" fill="#001023"/>
<circle cx="190.15" cy="137.58" r="38" fill="none" stroke="#d4a72a" stroke-width="1.1"/>
<circle cx="190.35" cy="137.38" r="33.1" fill="#3a8ab8"/>
<circle cx="190.05" cy="137.68" r="31.2" fill="#e3b42e"/>
<circle cx="190.15" cy="137.58" r="15.9" fill="#001023"/>
<g fill="none" stroke="#e8b2a7" stroke-width="3.26" stroke-linecap="round" stroke-linejoin="round">
<path d="M41.68 691.1L90.52 691.1"/>
<path d="M54.7 673.19L54.7 709.01"/>
<path d="M54.7 691.1L74.24 678.08L74.24 704.12Z"/>
</g>
<path d="M61.6 691.1h9M66.1 686.6v9" stroke="#ff26e2" stroke-width="1" fill="none"/>
<rect x="-9.02" y="664.7" width="42.8" height="52.6" rx="6" fill="none" stroke="#4d7fc4" stroke-width="1"/>
<rect x="-3.72" y="669.5" width="32.2" height="42.2" fill="#0b7d86"/>
<rect x="-3.32" y="670.9" width="30.4" height="40.6" fill="#4d7fc4"/>
<rect x="98.42" y="664.7" width="42.8" height="52.6" rx="6" fill="none" stroke="#4d7fc4" stroke-width="1"/>
<rect x="103.72" y="669.5" width="32.2" height="42.2" fill="#0b7d86"/>
<rect x="104.12" y="670.9" width="30.4" height="40.6" fill="#4d7fc4"/>
<rect x="-93.95" y="655.3" width="71.6" height="71.6" rx="5.6" fill="none" stroke="#d4a72a" stroke-width="1.1"/>
<rect x="-88.25" y="660.4" width="61.1" height="60.9" fill="#3a8ab8"/>
<rect x="-87.35" y="662.4" width="58.1" height="58" fill="#e3b42e"/>
<circle cx="-57.95" cy="691.1" r="15.9" fill="#001023"/>
<circle cx="190.15" cy="691.1" r="38" fill="none" stroke="#d4a72a" stroke-width="1.1"/>
<circle cx="190.35" cy="690.9" r="33.1" fill="#3a8ab8"/>
<circle cx="190.05" cy="691.2" r="31.2" fill="#e3b42e"/>
<circle cx="190.15" cy="691.1" r="15.9" fill="#001023"/>
<g fill="none" stroke="#e8b2a7" stroke-width="3.26" stroke-linecap="round" stroke-linejoin="round">
<path d="M627.98 609.4L676.82 609.4"/>
<path d="M641 591.49L641 627.31"/>
<path d="M641 609.4L660.54 596.38L660.54 622.42Z"/>
</g>
<path d="M647.9 609.4h9M652.4 604.9v9" stroke="#ff26e2" stroke-width="1" fill="none"/>
<path d="M528.35 609.4H598.68M706.12 609.4H776.45" stroke="#4d7fc4" stroke-width="8.2" fill="none"/>
<rect x="577.28" y="583" width="42.8" height="52.6" rx="6" fill="none" stroke="#4d7fc4" stroke-width="1"/>
<rect x="582.58" y="587.8" width="32.2" height="42.2" fill="#0b7d86"/>
<rect x="582.98" y="589.2" width="30.4" height="40.6" fill="#4d7fc4"/>
<rect x="684.72" y="583" width="42.8" height="52.6" rx="6" fill="none" stroke="#4d7fc4" stroke-width="1"/>
<rect x="690.02" y="587.8" width="32.2" height="42.2" fill="#0b7d86"/>
<rect x="690.42" y="589.2" width="30.4" height="40.6" fill="#4d7fc4"/>
<rect x="492.35" y="573.6" width="71.6" height="71.6" rx="5.6" fill="none" stroke="#d4a72a" stroke-width="1.1"/>
<rect x="498.05" y="578.7" width="61.1" height="60.9" fill="#3a8ab8"/>
<rect x="498.95" y="580.7" width="58.1" height="58" fill="#e3b42e"/>
<circle cx="528.35" cy="609.4" r="15.9" fill="#001023"/>
<circle cx="776.45" cy="609.4" r="38" fill="none" stroke="#d4a72a" stroke-width="1.1"/>
<circle cx="776.65" cy="609.2" r="33.1" fill="#3a8ab8"/>
<circle cx="776.35" cy="609.5" r="31.2" fill="#e3b42e"/>
<circle cx="776.45" cy="609.4" r="15.9" fill="#001023"/>
<g fill="none" stroke="#e8b2a7" stroke-width="3.26" stroke-linecap="round" stroke-linejoin="round">
<path d="M1213.98 137.58L1262.82 137.58"/>
<path d="M1227 119.67L1227 155.49"/>
<path d="M1227 137.58L1246.54 124.56L1246.54 150.6Z"/>
</g>
<path d="M1233.9 137.58h9M1238.4 133.08v9" stroke="#ff26e2" stroke-width="1" fill="none"/>
<rect x="1163.28" y="111.18" width="42.8" height="52.6" rx="6" fill="none" stroke="#4d7fc4" stroke-width="1"/>
<rect x="1168.58" y="115.98" width="32.2" height="42.2" fill="#0b7d86"/>
<rect x="1168.98" y="117.38" width="30.4" height="40.6" fill="#4d7fc4"/>
<rect x="1270.72" y="111.18" width="42.8" height="52.6" rx="6" fill="none" stroke="#4d7fc4" stroke-width="1"/>
<rect x="1276.02" y="115.98" width="32.2" height="42.2" fill="#0b7d86"/>
<rect x="1276.42" y="117.38" width="30.4" height="40.6" fill="#4d7fc4"/>
<rect x="1078.35" y="101.78" width="71.6" height="71.6" rx="5.6" fill="none" stroke="#d4a72a" stroke-width="1.1"/>
<rect x="1084.05" y="106.88" width="61.1" height="60.9" fill="#3a8ab8"/>
<rect x="1084.95" y="108.88" width="58.1" height="58" fill="#e3b42e"/>
<circle cx="1114.35" cy="137.58" r="15.9" fill="#001023"/>
<circle cx="1362.45" cy="137.58" r="38" fill="none" stroke="#d4a72a" stroke-width="1.1"/>
<circle cx="1362.65" cy="137.38" r="33.1" fill="#3a8ab8"/>
<circle cx="1362.35" cy="137.68" r="31.2" fill="#e3b42e"/>
<circle cx="1362.45" cy="137.58" r="15.9" fill="#001023"/>
<g fill="none" stroke="#e8b2a7" stroke-width="3.26" stroke-linecap="round" stroke-linejoin="round">
<path d="M1213.98 691.1L1262.82 691.1"/>
<path d="M1227 673.19L1227 709.01"/>
<path d="M1227 691.1L1246.54 678.08L1246.54 704.12Z"/>
</g>
<path d="M1233.9 691.1h9M1238.4 686.6v9" stroke="#ff26e2" stroke-width="1" fill="none"/>
<rect x="1163.28" y="664.7" width="42.8" height="52.6" rx="6" fill="none" stroke="#4d7fc4" stroke-width="1"/>
<rect x="1168.58" y="669.5" width="32.2" height="42.2" fill="#0b7d86"/>
<rect x="1168.98" y="670.9" width="30.4" height="40.6" fill="#4d7fc4"/>
<rect x="1270.72" y="664.7" width="42.8" height="52.6" rx="6" fill="none" stroke="#4d7fc4" stroke-width="1"/>
<rect x="1276.02" y="669.5" width="32.2" height="42.2" fill="#0b7d86"/>
<rect x="1276.42" y="670.9" width="30.4" height="40.6" fill="#4d7fc4"/>
<rect x="1078.35" y="655.3" width="71.6" height="71.6" rx="5.6" fill="none" stroke="#d4a72a" stroke-width="1.1"/>
<rect x="1084.05" y="660.4" width="61.1" height="60.9" fill="#3a8ab8"/>
<rect x="1084.95" y="662.4" width="58.1" height="58" fill="#e3b42e"/>
<circle cx="1114.35" cy="691.1" r="15.9" fill="#001023"/>
<circle cx="1362.45" cy="691.1" r="38" fill="none" stroke="#d4a72a" stroke-width="1.1"/>
<circle cx="1362.65" cy="690.9" r="33.1" fill="#3a8ab8"/>
<circle cx="1362.35" cy="691.2" r="31.2" fill="#e3b42e"/>
<circle cx="1362.45" cy="691.1" r="15.9" fill="#001023"/>
<g fill="#f0f0f0" text-anchor="middle">
<text x="-40.53" y="-226.05" class="pn" font-size="38.6">1</text>
<text x="-40.53" y="-185.65" class="pn" font-size="28.4">P6</text>
<text x="335.53" y="-154.42" class="pn" font-size="38.6">2</text>
<text x="335.53" y="-125.82" class="pm" font-size="15.8" textLength="74.7" lengthAdjust="spacingAndGlyphs">ring_num</text>
<text transform="translate(4.88 137.58) rotate(-90)" class="pn" font-size="13" y="4.7">1</text>
<text transform="translate(18.88 137.58) rotate(-90)" class="pn" font-size="12.6" y="4.7">P21</text>
<text transform="translate(111.82 137.58) rotate(-90)" class="pn" font-size="14" y="5.1">2</text>
<text transform="translate(127.62 137.58) rotate(-90)" class="pm" font-size="7.6" y="2.6" opacity="0.9" textLength="35" lengthAdjust="spacingAndGlyphs">ring_num</text>
<text x="-57.95" y="132.68" class="pn" font-size="26.8">1</text>
<text x="-58.35" y="160.78" class="pn" font-size="19.9">P21</text>
<text x="190.45" y="132.28" class="pn" font-size="28.4">2</text>
<text x="190.15" y="152.28" class="pm" font-size="10.6" textLength="49.1" lengthAdjust="spacingAndGlyphs">ring_num</text>
<text x="-40.53" y="327.47" class="pn" font-size="38.6">1</text>
<text x="-40.53" y="367.87" class="pn" font-size="28.4">P6</text>
<text x="335.53" y="399.1" class="pn" font-size="38.6">2</text>
<text x="335.53" y="427.7" class="pm" font-size="15.8" textLength="74.7" lengthAdjust="spacingAndGlyphs">ring_top</text>
<text transform="translate(4.88 691.1) rotate(-90)" class="pn" font-size="13" y="4.7">1</text>
<text transform="translate(18.88 691.1) rotate(-90)" class="pn" font-size="12.6" y="4.7">P20</text>
<text transform="translate(111.82 691.1) rotate(-90)" class="pn" font-size="14" y="5.1">2</text>
<text transform="translate(127.62 691.1) rotate(-90)" class="pm" font-size="7.6" y="2.6" opacity="0.9" textLength="35" lengthAdjust="spacingAndGlyphs">ring_top</text>
<text x="-57.95" y="686.2" class="pn" font-size="26.8">1</text>
<text x="-58.35" y="714.3" class="pn" font-size="19.9">P20</text>
<text x="190.45" y="685.8" class="pn" font-size="28.4">2</text>
<text x="190.15" y="705.8" class="pm" font-size="10.6" textLength="49.1" lengthAdjust="spacingAndGlyphs">ring_top</text>
<text x="-40.53" y="880.99" class="pn" font-size="38.6">1</text>
<text x="-40.53" y="921.39" class="pn" font-size="28.4">P6</text>
<text x="335.53" y="952.62" class="pn" font-size="38.6">2</text>
<text x="335.53" y="978.02" class="pm" font-size="13" textLength="70.65" lengthAdjust="spacingAndGlyphs">ring_home</text>
<text x="545.77" y="-307.75" class="pn" font-size="38.6">1</text>
<text x="545.77" y="-267.35" class="pn" font-size="28.4">P7</text>
<text x="921.83" y="-236.12" class="pn" font-size="38.6">2</text>
<text x="921.83" y="-210.72" class="pm" font-size="13" textLength="78.5" lengthAdjust="spacingAndGlyphs">middle_num</text>
<text x="545.77" y="245.77" class="pn" font-size="38.6">1</text>
<text x="545.77" y="286.17" class="pn" font-size="28.4">P7</text>
<text x="921.83" y="317.4" class="pn" font-size="38.6">2</text>
<text x="921.83" y="342.8" class="pm" font-size="13" textLength="78.5" lengthAdjust="spacingAndGlyphs">middle_top</text>
<text transform="translate(591.18 609.4) rotate(-90)" class="pn" font-size="13" y="4.7">1</text>
<text transform="translate(605.18 609.4) rotate(-90)" class="pn" font-size="12.6" y="4.7">P20</text>
<text transform="translate(698.12 609.4) rotate(-90)" class="pn" font-size="14" y="5.1">2</text>
<text transform="translate(713.92 609.4) rotate(-90)" class="pm" font-size="6.2" y="2.6" opacity="0.9" textLength="35" lengthAdjust="spacingAndGlyphs">middle_top</text>
<text x="528.35" y="604.5" class="pn" font-size="26.8">1</text>
<text x="527.95" y="632.6" class="pn" font-size="19.9">P20</text>
<text x="776.75" y="604.1" class="pn" font-size="28.4">2</text>
<text x="776.45" y="621.5" class="pm" font-size="9.6" textLength="52.3" lengthAdjust="spacingAndGlyphs">middle_top</text>
<text x="545.77" y="799.29" class="pn" font-size="38.6">1</text>
<text x="545.77" y="839.69" class="pn" font-size="28.4">P7</text>
<text x="921.83" y="870.92" class="pn" font-size="38.6">2</text>
<text x="921.83" y="896.32" class="pm" font-size="13" textLength="86.35" lengthAdjust="spacingAndGlyphs">middle_home</text>
<text x="1131.77" y="-226.05" class="pn" font-size="38.6">1</text>
<text x="1131.77" y="-185.65" class="pn" font-size="28.4">P8</text>
<text x="1507.83" y="-154.42" class="pn" font-size="38.6">2</text>
<text x="1507.83" y="-129.02" class="pm" font-size="13" textLength="70.65" lengthAdjust="spacingAndGlyphs">index_num</text>
<text transform="translate(1177.18 137.58) rotate(-90)" class="pn" font-size="13" y="4.7">1</text>
<text transform="translate(1191.18 137.58) rotate(-90)" class="pn" font-size="12.6" y="4.7">P21</text>
<text transform="translate(1284.12 137.58) rotate(-90)" class="pn" font-size="14" y="5.1">2</text>
<text transform="translate(1299.92 137.58) rotate(-90)" class="pm" font-size="6.2" y="2.6" opacity="0.9" textLength="35" lengthAdjust="spacingAndGlyphs">index_num</text>
<text x="1114.35" y="132.68" class="pn" font-size="26.8">1</text>
<text x="1113.95" y="160.78" class="pn" font-size="19.9">P21</text>
<text x="1362.75" y="132.28" class="pn" font-size="28.4">2</text>
<text x="1362.45" y="149.68" class="pm" font-size="9.6" textLength="52.3" lengthAdjust="spacingAndGlyphs">index_num</text>
<text x="1131.77" y="327.47" class="pn" font-size="38.6">1</text>
<text x="1131.77" y="367.87" class="pn" font-size="28.4">P8</text>
<text x="1507.83" y="399.1" class="pn" font-size="38.6">2</text>
<text x="1507.83" y="424.5" class="pm" font-size="13" textLength="70.65" lengthAdjust="spacingAndGlyphs">index_top</text>
<text transform="translate(1177.18 691.1) rotate(-90)" class="pn" font-size="13" y="4.7">1</text>
<text transform="translate(1191.18 691.1) rotate(-90)" class="pn" font-size="12.6" y="4.7">P20</text>
<text transform="translate(1284.12 691.1) rotate(-90)" class="pn" font-size="14" y="5.1">2</text>
<text transform="translate(1299.92 691.1) rotate(-90)" class="pm" font-size="6.2" y="2.6" opacity="0.9" textLength="35" lengthAdjust="spacingAndGlyphs">index_top</text>
<text x="1114.35" y="686.2" class="pn" font-size="26.8">1</text>
<text x="1113.95" y="714.3" class="pn" font-size="19.9">P20</text>
<text x="1362.75" y="685.8" class="pn" font-size="28.4">2</text>
<text x="1362.45" y="703.2" class="pm" font-size="9.6" textLength="52.3" lengthAdjust="spacingAndGlyphs">index_top</text>
<text x="1131.77" y="880.99" class="pn" font-size="38.6">1</text>
<text x="1131.77" y="921.39" class="pn" font-size="28.4">P8</text>
<text x="1507.83" y="952.62" class="pn" font-size="38.6">2</text>
<text x="1507.83" y="978.02" class="pm" font-size="13" textLength="78.5" lengthAdjust="spacingAndGlyphs">index_home</text>
</g>
<path d="M545.5 0L545.5 900" stroke="#22dcf8" stroke-opacity="0.8" stroke-width="1" fill="none"/>
<path d="M1131.5 0L1131.5 900" stroke="#22dcf8" stroke-opacity="0.8" stroke-width="1" fill="none"/>
<path d="M335.53 -147.32L190.15 137.58" stroke="#22dcf8" stroke-opacity="0.62" stroke-width="1" fill="none"/>
<path d="M335.53 406.2L190.15 691.1" stroke="#22dcf8" stroke-opacity="0.62" stroke-width="1" fill="none"/>
<path d="M335.53 959.72L190.15 1244.62" stroke="#22dcf8" stroke-opacity="0.62" stroke-width="1" fill="none"/>
<path d="M921.83 -229.02L776.45 55.88" stroke="#22dcf8" stroke-opacity="0.62" stroke-width="1" fill="none"/>
<path d="M921.83 324.5L776.45 609.4" stroke="#22dcf8" stroke-opacity="0.62" stroke-width="1" fill="none"/>
<path d="M921.83 878.02L776.45 1162.92" stroke="#22dcf8" stroke-opacity="0.62" stroke-width="1" fill="none"/>
<path d="M1507.83 -147.32L1362.45 137.58" stroke="#22dcf8" stroke-opacity="0.62" stroke-width="1" fill="none"/>
<path d="M1507.83 406.2L1362.45 691.1" stroke="#22dcf8" stroke-opacity="0.62" stroke-width="1" fill="none"/>
<path d="M1507.83 959.72L1362.45 1244.62" stroke="#22dcf8" stroke-opacity="0.62" stroke-width="1" fill="none"/>
<path d="M12.38 137.58L528.35 55.88" stroke="#22dcf8" stroke-opacity="0.55" stroke-width="1" fill="none"/>
<path d="M598.68 55.88L1114.35 137.58" stroke="#22dcf8" stroke-opacity="0.55" stroke-width="1" fill="none"/>
<path d="M119.82 137.58L190.15 137.58" stroke="#22dcf8" stroke-opacity="0.95" stroke-width="1" fill="none"/>
<path d="M1114.35 137.58L1184.68 137.58" stroke="#22dcf8" stroke-opacity="0.95" stroke-width="1" fill="none"/>
<path d="M113.12 131.48l13 12.6M113.12 144.08l13 -12.6" stroke="#22dcf8" stroke-opacity="0.9" stroke-width="1" fill="none"/>
<path d="M1178 132.58l6 5l-6 5" stroke="#22dcf8" stroke-opacity="0.9" stroke-width="1" fill="none"/>
<path d="M12.38 691.1L528.35 609.4" stroke="#22dcf8" stroke-opacity="0.55" stroke-width="1" fill="none"/>
<path d="M598.68 609.4L1114.35 691.1" stroke="#22dcf8" stroke-opacity="0.55" stroke-width="1" fill="none"/>
<path d="M119.82 691.1L190.15 691.1" stroke="#22dcf8" stroke-opacity="0.95" stroke-width="1" fill="none"/>
<path d="M1114.35 691.1L1184.68 691.1" stroke="#22dcf8" stroke-opacity="0.95" stroke-width="1" fill="none"/>
<path d="M113.12 685l13 12.6M113.12 697.6l13 -12.6" stroke="#22dcf8" stroke-opacity="0.9" stroke-width="1" fill="none"/>
<path d="M1178 686.1l6 5l-6 5" stroke="#22dcf8" stroke-opacity="0.9" stroke-width="1" fill="none"/>
<path d="M1166.5 773V830M1126 813.5H1190" stroke="#f2f2f2" stroke-width="1" fill="none"/>
</svg>
<svg width="1405" height="884" viewBox="0 0 1405 884" style="left:0;top:0;pointer-events:none">
<g transform="translate(5 29.8)" ><path d="M3.3 1.5H15.2L20.9 7.2V22.6H3.3Z" fill="#545454" stroke="#ded3dd" stroke-width="1.1"/><path d="M15.2 1.5V7.2H20.9Z" fill="#ded3dd"/></g>
<g transform="translate(37 29.8)" ><path d="M-0.2 4.6Q-0.2 3.1 1.3 3.1H7.6Q8.6 3.1 9.3 3.9L11.4 6.3H20.8Q22.3 6.3 22.3 7.8V10H3.2L-0.2 19Z" fill="#ded3dd"/><path d="M4.6 11.1H23.2Q24.6 11.1 24.1 12.4L20.6 20.1Q20.2 21 19.2 21H1.3Q-0.1 21 0.4 19.8L3.4 12Q3.8 11.1 4.6 11.1Z" fill="#ded3dd"/></g>
<g transform="translate(69 29.8)" ><path d="M0.9 1H19.2L23.3 5.1V23H0.9Z" fill="#ded3dd"/><rect x="6.3" y="2.4" width="9.8" height="5.8" fill="#545454"/><rect x="11.3" y="3.1" width="2.9" height="4.5" fill="#ded3dd"/><rect x="5.2" y="12.4" width="12.5" height="8.6" fill="#545454"/></g>
<g transform="translate(110 29.8)" ><rect x="1" y="1" width="22" height="22" rx="3.8" fill="#0c6a12"/><g fill="none" stroke="#3f9a43" stroke-width="1.3"><path d="M5.5 1V8.5L1 13"/><path d="M8.8 1V6.5Q8.8 9 11 10.5L14 13"/><path d="M12.3 1V4Q13 8 17 9.5"/><path d="M3 23L9 17H12"/><path d="M1 18L4 15.2"/></g><circle cx="4.8" cy="14.3" r="1.9" fill="#fff" stroke="#f79a1d" stroke-width="0.9"/><circle cx="20.8" cy="9.5" r="1.7" fill="#fff" stroke="#f79a1d" stroke-width="0.9"/><circle cx="20" cy="22" r="1.2" fill="#f79a1d"/><g transform="translate(16.5 16.7)"><g fill="#fff" stroke="#fff" stroke-width="1.6"><rect x="-1.5" y="-7" width="3" height="4" rx="0.6" transform="rotate(0)"/><rect x="-1.5" y="-7" width="3" height="4" rx="0.6" transform="rotate(45)"/><rect x="-1.5" y="-7" width="3" height="4" rx="0.6" transform="rotate(90)"/><rect x="-1.5" y="-7" width="3" height="4" rx="0.6" transform="rotate(135)"/><rect x="-1.5" y="-7" width="3" height="4" rx="0.6" transform="rotate(180)"/><rect x="-1.5" y="-7" width="3" height="4" rx="0.6" transform="rotate(225)"/><rect x="-1.5" y="-7" width="3" height="4" rx="0.6" transform="rotate(270)"/><rect x="-1.5" y="-7" width="3" height="4" rx="0.6" transform="rotate(315)"/><circle r="4.6"/></g><g fill="#f2647e"><rect x="-1.5" y="-7" width="3" height="4" rx="0.6" transform="rotate(0)"/><rect x="-1.5" y="-7" width="3" height="4" rx="0.6" transform="rotate(45)"/><rect x="-1.5" y="-7" width="3" height="4" rx="0.6" transform="rotate(90)"/><rect x="-1.5" y="-7" width="3" height="4" rx="0.6" transform="rotate(135)"/><rect x="-1.5" y="-7" width="3" height="4" rx="0.6" transform="rotate(180)"/><rect x="-1.5" y="-7" width="3" height="4" rx="0.6" transform="rotate(225)"/><rect x="-1.5" y="-7" width="3" height="4" rx="0.6" transform="rotate(270)"/><rect x="-1.5" y="-7" width="3" height="4" rx="0.6" transform="rotate(315)"/><circle r="4.6"/></g><circle r="2.1" fill="#0c6a12" stroke="#fff" stroke-width="0.5"/></g></g>
<g transform="translate(151 29.8)" ><path d="M5.3 1.5H15.6L20.2 6.1V19.8H5.3Z" fill="#545454" stroke="#ded3dd" stroke-width="1.1"/><path d="M15.6 1.5V6.1H20.2Z" fill="#ded3dd"/><path d="M2.4 1.2V20M1 1.4H3.8M1 19.8H3.8M5 22.8H20.4M5.2 21.4V24.2M20.2 21.4V24.2" stroke="#ded3dd" stroke-width="1" fill="none"/></g>
<g transform="translate(183 29.8)" ><rect x="4.4" y="1.5" width="15.2" height="6" fill="#545454" stroke="#ded3dd" stroke-width="1.1"/><rect x="-0.3" y="6.3" width="24.8" height="11.2" rx="2.2" fill="#ded3dd"/><path d="M4 11.8H20.2V20.4L17.6 23H4Z" fill="#545454" stroke="#ded3dd" stroke-width="1.1"/><path d="M1.5 11.8H22.8" stroke="#ded3dd" stroke-width="1.1"/><path d="M20.2 20.4H17.6V23Z" fill="#ded3dd"/></g>
<g transform="translate(215 29.8)" ><rect x="6.6" y="1.5" width="11.2" height="5" fill="#545454" stroke="#ded3dd" stroke-width="1.1"/><rect x="0.2" y="4.6" width="24" height="7.8" rx="1.2" fill="#ded3dd"/><path d="M1.8 8.6H22.6" stroke="#6a6068" stroke-width="0.9"/><path d="M6.6 9.2H17.8V16.6L15.4 19H6.6Z" fill="#545454" stroke="#ded3dd" stroke-width="1.1"/><path d="M17.8 16.6H15.4V19Z" fill="#ded3dd"/><path d="M3.1 12V22.6M21.5 12V22.6M0.3 22.6H5.8M18.8 22.6H24.3" stroke="#ded3dd" stroke-width="1.3" fill="none"/></g>
<g transform="translate(256 29.8)" ><path d="M3.1 0.9V9.1H10.2" fill="none" stroke="#ded3dd" stroke-width="1.8" stroke-linecap="round" stroke-linejoin="round"/><path d="M4.2 8.6A8.7 8.7 0 1 1 4.3 17.4" fill="none" stroke="#ded3dd" stroke-width="1.8" stroke-linecap="round"/></g>
<g transform="translate(312.4 29.8) scale(-1 1)"><path d="M3.1 0.9V9.1H10.2" fill="none" stroke="#868686" stroke-width="1.8" stroke-linecap="round" stroke-linejoin="round"/><path d="M4.2 8.6A8.7 8.7 0 1 1 4.3 17.4" fill="none" stroke="#868686" stroke-width="1.8" stroke-linecap="round"/></g>
<g transform="translate(329 29.8)" ><circle cx="13.6" cy="10.2" r="8.4" fill="none" stroke="#ded3dd" stroke-width="1.5"/><path d="M7.6 16.2L1.2 22.6" stroke="#ded3dd" stroke-width="1.9" stroke-linecap="round"/><text x="13.6" y="14.6" font-size="12" font-weight="700" text-anchor="middle" fill="#ded3dd" font-family="Liberation Sans,sans-serif">A</text></g>
<g transform="translate(370 29.8)" ><g fill="none" stroke="#ded3dd" stroke-width="1.6" stroke-linecap="round" stroke-linejoin="round"><path d="M2.6 10.6A9.6 9.6 0 0 1 20.6 6.6"/><path d="M21.6 13A9.6 9.6 0 0 1 3.6 17.2"/><path d="M15.2 7.2H21.4V1.2"/><path d="M9 16.8H2.8V22.8"/></g></g>
<g transform="translate(402 29.8)" ><circle cx="10.2" cy="10.2" r="8.4" fill="none" stroke="#ded3dd" stroke-width="1.5"/><path d="M16.14 16.14L23.2 22.6" stroke="#ded3dd" stroke-width="1.9" stroke-linecap="round"/><path d="M5.8 10.2H14.6M10.2 5.8V14.6" stroke="#ded3dd" stroke-width="1.9"/></g>
<g transform="translate(434 29.8)" ><circle cx="10.2" cy="10.2" r="8.4" fill="none" stroke="#ded3dd" stroke-width="1.5"/><path d="M16.14 16.14L23.2 22.6" stroke="#ded3dd" stroke-width="1.9" stroke-linecap="round"/><path d="M5.8 10.2H14.6" stroke="#ded3dd" stroke-width="1.9"/></g>
<g transform="translate(466 29.8)" ><circle cx="10.2" cy="10.2" r="8.4" fill="none" stroke="#ded3dd" stroke-width="1.5"/><path d="M16.14 16.14L23.2 22.6" stroke="#ded3dd" stroke-width="1.9" stroke-linecap="round"/><path d="M6.6 5.2H11.6L14.2 7.8V15.2H6.6Z" fill="#d6d4d6"/></g>
<g transform="translate(498 29.8)" ><circle cx="10.2" cy="10.2" r="8.4" fill="none" stroke="#ded3dd" stroke-width="1.5"/><path d="M16.14 16.14L23.2 22.6" stroke="#ded3dd" stroke-width="1.9" stroke-linecap="round"/><path d="M4 14L8.2 8.6L11 12L12.6 10.4L16 14Z" fill="#d6d4d6"/><circle cx="13.4" cy="6.8" r="1.4" fill="#d6d4d6"/></g>
<g transform="translate(530 29.8)" ><circle cx="10.2" cy="10.2" r="8.4" fill="none" stroke="#ded3dd" stroke-width="1.5"/><path d="M16.14 16.14L23.2 22.6" stroke="#ded3dd" stroke-width="1.9" stroke-linecap="round"/><path d="M6.6 4.4V14.6L9.2 12.4L11 16.2L12.8 15.4L11 11.8H14.2Z" fill="#d6d4d6"/></g>
<g transform="translate(571 29.8)" ><path d="M1.8 12.4V20.8H21.8Z" fill="#ded3dd"/><path d="M17.4 12Q17.4 5.8 8.6 5.8" fill="none" stroke="#42b8eb" stroke-width="1.8" stroke-linecap="round"/><path d="M11.6 2.2L7.6 5.8L12 8.6" fill="none" stroke="#42b8eb" stroke-width="1.8" stroke-linecap="round" stroke-linejoin="round"/></g>
<g transform="translate(603 29.8)" ><path d="M22 12.4V20.8H2Z" fill="#ded3dd"/><path d="M6.4 12Q6.4 5.8 15.2 5.8" fill="none" stroke="#42b8eb" stroke-width="1.8" stroke-linecap="round"/><path d="M12.2 2.2L16.2 5.8L11.8 8.6" fill="none" stroke="#42b8eb" stroke-width="1.8" stroke-linecap="round" stroke-linejoin="round"/></g>
<g transform="translate(635 29.8)" ><path d="M1.8 2.2V11.2H21.6Z" fill="#ded3dd"/><path d="M1.8 22.4V13.6H21.6Z" fill="#42b8eb"/></g>
<g transform="translate(667 29.8)" ><path d="M1.8 21.6H10.8V2.6Z" fill="#ded3dd"/><path d="M22 21.6H13V2.6Z" fill="#42b8eb"/></g>
<g transform="translate(699 29.8)" ><rect x="1.4" y="1.4" width="21.6" height="21.6" fill="none" stroke="#8a8a8a" stroke-width="1" stroke-dasharray="3.2 2"/><rect x="0" y="0" width="2.8" height="2.8" fill="#8a8a8a"/><rect x="21.6" y="0" width="2.8" height="2.8" fill="#8a8a8a"/><rect x="0" y="21.6" width="2.8" height="2.8" fill="#8a8a8a"/><rect x="21.6" y="21.6" width="2.8" height="2.8" fill="#8a8a8a"/><rect x="3.6" y="3.6" width="11.4" height="11.4" fill="#4a4a4a" stroke="#8a8a8a" stroke-width="1.1"/><rect x="9.4" y="9.4" width="11.4" height="11.4" fill="#4a4a4a" stroke="#8a8a8a" stroke-width="1.1"/></g>
<g transform="translate(731 29.8)" ><rect x="3.4" y="3.6" width="12" height="12" fill="#4a4a4a" stroke="#8a8a8a" stroke-width="1.1"/><rect x="2" y="2.2" width="2.8" height="2.8" fill="#8a8a8a"/><rect x="14" y="2.2" width="2.8" height="2.8" fill="#8a8a8a"/><rect x="2" y="14.2" width="2.8" height="2.8" fill="#8a8a8a"/><rect x="9.6" y="9.6" width="12" height="12" fill="#4a4a4a" stroke="#8a8a8a" stroke-width="1.1"/><rect x="8.2" y="8.2" width="2.8" height="2.8" fill="#8a8a8a"/><rect x="20.2" y="8.2" width="2.8" height="2.8" fill="#8a8a8a"/><rect x="8.2" y="20.2" width="2.8" height="2.8" fill="#8a8a8a"/><rect x="20.2" y="20.2" width="2.8" height="2.8" fill="#8a8a8a"/></g>
<g transform="translate(763 29.8)" ><path d="M6.6 11V6.6A5.2 5.2 0 0 1 17 6.6V11" fill="none" stroke="#7e7c7e" stroke-width="2.2"/><rect x="3" y="10.6" width="17.8" height="13.2" rx="2" fill="#7e7c7e"/><circle cx="11.9" cy="16" r="1.7" fill="#323232"/><rect x="11.1" y="16" width="1.6" height="4.4" fill="#323232"/></g>
<g transform="translate(795 29.8)" ><path d="M13.2 11V6.6A5.2 5.2 0 0 1 23.6 6.6V8.2" fill="none" stroke="#7e7c7e" stroke-width="2.2"/><rect x="0" y="10.6" width="17.8" height="13.2" rx="2" fill="#7e7c7e"/><circle cx="8.9" cy="16" r="1.7" fill="#323232"/><rect x="8.1" y="16" width="1.6" height="4.4" fill="#323232"/></g>
<g transform="translate(836 29.8)" ><path d="M0.6 3.6H23.6V20.4H0.6V14.6Q3.2 14.4 3.2 12Q3.2 9.6 0.6 9.4Z" fill="none" stroke="#ded3dd" stroke-width="1.1"/><rect x="3.2" y="0" width="4.6" height="6.6" fill="#42b8eb"/><rect x="3.2" y="17.2" width="4.6" height="6.6" fill="#42b8eb"/><rect x="10.3" y="0" width="4.6" height="6.6" fill="#42b8eb"/><rect x="10.3" y="17.2" width="4.6" height="6.6" fill="#42b8eb"/><rect x="17.3" y="0" width="4.6" height="6.6" fill="#42b8eb"/><rect x="17.3" y="17.2" width="4.6" height="6.6" fill="#42b8eb"/><circle cx="17.2" cy="17.4" r="6.8" fill="#f2647e"/><path d="M13.4 21.2L14.2 18.4L19.2 13.4L21.2 15.4L16.2 20.4Z" fill="#fff"/></g>
<g transform="translate(868 29.8)" ><rect x="1" y="2" width="4.8" height="19.8" fill="#ded3dd"/><rect x="6.8" y="2" width="4.8" height="19.8" fill="#ded3dd"/><path d="M1.8 4.6H5M1.8 6.4H5M1.8 8.2H5M7.6 4.6H10.8M7.6 6.4H10.8M7.6 8.2H10.8M1.8 18.6H5M7.6 18.6H10.8" stroke="#9a8f99" stroke-width="0.7"/><path d="M12.6 3.2L17.4 1.4L23.6 20L18.8 21.8Z" fill="#42b8eb"/><path d="M14.6 4.6L17 3.8M15.3 6.6L17.7 5.8M16 8.6L18.4 7.8" stroke="#2a86b0" stroke-width="0.8"/><circle cx="15.8" cy="15" r="4.6" fill="#c9c6c9" stroke="#f2647e" stroke-width="1.7"/><path d="M15.8 10.4A4.6 4.6 0 0 1 15.8 19.6Z" fill="#b4d9ec"/><circle cx="15.8" cy="15" r="4.6" fill="none" stroke="#f2647e" stroke-width="1.7"/><path d="M19.4 18.6L23 22.6" stroke="#f2647e" stroke-width="2" stroke-linecap="round"/></g>
<g transform="translate(909 29.8)" ><rect x="2" y="0.2" width="21.6" height="23.6" rx="3" fill="#e4e2e4"/><path d="M6.4 13.2H21M6.4 16.8H21M6.4 20.4H21" stroke="#555" stroke-width="1.7"/><path d="M4.6 13.2H6M4.6 16.8H6M4.6 20.4H6" stroke="#555" stroke-width="1"/><rect x="0" y="2.2" width="19.2" height="8.2" fill="#1b8bc0"/><text x="9.6" y="9.3" font-size="8.6" font-weight="700" text-anchor="middle" fill="#fff" font-family="Liberation Sans,sans-serif" textLength="16.5" lengthAdjust="spacingAndGlyphs">NET</text></g>
<g transform="translate(941 29.8)" ><g fill="none" stroke="#ded3dd" stroke-width="1"><rect x="2.4" y="2.8" width="3.8" height="3.8"/><rect x="2.4" y="9.8" width="3.8" height="3.8"/><rect x="2.4" y="16.8" width="3.8" height="3.8"/><path d="M9.4 4.7H19M9.4 11.7H13M9.4 18.7H11"/></g><circle cx="17.4" cy="17.2" r="7" fill="#f2647e"/><path d="M13.6 17L16.4 19.8L21.4 14.6" fill="none" stroke="#fff" stroke-width="1.9"/></g>
<path d="M1140.5 40.5L1143.8 43.7L1147.1 40.5" fill="none" stroke="#262626" stroke-width="2" stroke-linecap="round" stroke-linejoin="round"/>
<g transform="translate(1161 29.8)" ><rect x="0" y="0.4" width="24.2" height="23.6" fill="#4d7fc4"/><path d="M0 0.4H14.6L4 24H0Z" fill="#c83434"/><path d="M14.6 0.4H15.6L5 24H4Z" fill="#f4f4f4"/><path d="M15.6 0.4H16.5L5.9 24H5Z" fill="#1a1a1a"/><path d="M16.5 0.4H17.5L6.9 24H5.9Z" fill="#f4f4f4"/><path d="M17.5 0.4H18.4L7.8 24H6.9Z" fill="#1a1a1a"/></g>
<g transform="translate(1201.8 29.7)" ><rect x="0" y="0" width="24.5" height="24.4" rx="3.8" fill="#dfd5bf"/><g fill="none" stroke="#262626" stroke-width="1.5"><path d="M11.2 4V13.4L7.4 15.8"/><path d="M12 9.2H18.2"/><path d="M0 17.1H7"/><path d="M7.4 18.5L10.6 20.8"/><path d="M11.2 22V24.4"/></g><path d="M7 13.6V21.2" stroke="#262626" stroke-width="1.9"/><circle cx="10.9" cy="9.2" r="2.3" fill="#303030"/><rect x="9.2" y="0.4" width="3.9" height="3.8" fill="#d4243c"/><rect x="18" y="7.4" width="6.4" height="3.6" fill="#d4243c"/><rect x="9.5" y="19.3" width="2.7" height="3" fill="#d4243c"/></g>
<g transform="translate(1243 29.8)" ><rect x="1" y="1.2" width="22" height="22" rx="2.6" fill="#8e8e8e"/><path d="M1 6.7H23" stroke="#fff" stroke-width="1.3"/><path d="M2.4 3.8H4.2M3.3 2.9V4.7M5.6 3.8H7.4M6.5 2.9V4.7M8.6 3.8H10.4M9.5 2.9V4.7" stroke="#f4f4f4" stroke-width="0.8"/><path d="M3 10.5L7.9 13.2L3 15.8" fill="none" stroke="#fff" stroke-width="1.7"/><path d="M9 17.7H14.1" stroke="#fff" stroke-width="1.5"/></g>
<g transform="translate(192 63.4)" ><path d="M1.8 1.2V17.2Q1.8 20.6 5.2 20.6H18.6Q22 20.6 22 17.2V1.2" fill="none" stroke="#ded3dd" stroke-width="1.4"/><path d="M7.6 9.4H16.4M7.6 12.8H16.4" stroke="#ded3dd" stroke-width="1.1"/><circle cx="11.9" cy="21.4" r="3" fill="#42b8eb"/></g>
<path d="M174.2 74.2L177.1 71.3L180 74.2M174.2 78.2L177.1 81.1L180 78.2" fill="none" stroke="#fff" stroke-width="1.5" stroke-linecap="round" stroke-linejoin="round"/>
<path d="M396 74.2L398.9 71.3L401.8 74.2M396 78.2L398.9 81.1L401.8 78.2" fill="none" stroke="#fff" stroke-width="1.5" stroke-linecap="round" stroke-linejoin="round"/>
<path d="M641.1 74.2L644 71.3L646.9 74.2M641.1 78.2L644 81.1L646.9 78.2" fill="none" stroke="#fff" stroke-width="1.5" stroke-linecap="round" stroke-linejoin="round"/>
<path d="M766.1 74.2L769 71.3L771.9 74.2M766.1 78.2L769 81.1L771.9 78.2" fill="none" stroke="#fff" stroke-width="1.5" stroke-linecap="round" stroke-linejoin="round"/>
<path d="M1388.3 636.2L1391.2 633.3L1394.1 636.2M1388.3 640.2L1391.2 643.1L1394.1 640.2" fill="none" stroke="#fff" stroke-width="1.5" stroke-linecap="round" stroke-linejoin="round"/>
<path d="M1388.3 676.8L1391.2 673.9L1394.1 676.8M1388.3 680.8L1391.2 683.7L1394.1 680.8" fill="none" stroke="#fff" stroke-width="1.5" stroke-linecap="round" stroke-linejoin="round"/>
<g transform="translate(1278.9 159.9)"><circle r="7.6" fill="#343434" opacity="0.55"/><path d="M-6.3 0Q-3.2 -4 0 -4Q3.2 -4 6.3 0Q3.2 4 0 4Q-3.2 4 -6.3 0Z" fill="#ded3dd"/><circle r="2.3" fill="#ded3dd" stroke="#5a565a" stroke-width="1.1"/></g>
<g transform="translate(1278.9 177.9)"><circle r="7.6" fill="#343434" opacity="0.55"/><path d="M-6.3 0Q-3.2 -4 0 -4Q3.2 -4 6.3 0Q3.2 4 0 4Q-3.2 4 -6.3 0Z" fill="#ded3dd"/><circle r="2.3" fill="#ded3dd" stroke="#5a565a" stroke-width="1.1"/></g>
<g transform="translate(1278.9 195.9)"><circle r="7.6" fill="#343434" opacity="0.55"/><path d="M-6.3 0Q-3.2 -4 0 -4Q3.2 -4 6.3 0Q3.2 4 0 4Q-3.2 4 -6.3 0Z" fill="#ded3dd"/><circle r="2.3" fill="#ded3dd" stroke="#5a565a" stroke-width="1.1"/></g>
<g transform="translate(1278.9 213.9)"><circle r="7.6" fill="#343434" opacity="0.55"/><path d="M-6.3 0Q-3.2 -4 0 -4Q3.2 -4 6.3 0Q3.2 4 0 4Q-3.2 4 -6.3 0Z" fill="#ded3dd"/><circle r="2.3" fill="#ded3dd" stroke="#5a565a" stroke-width="1.1"/></g>
<g transform="translate(1278.9 231.9)"><circle r="7.6" fill="#343434" opacity="0.55"/><path d="M-6.3 0Q-3.2 -4 0 -4Q3.2 -4 6.3 0Q3.2 4 0 4Q-3.2 4 -6.3 0Z" fill="#ded3dd"/><circle r="2.3" fill="#ded3dd" stroke="#5a565a" stroke-width="1.1"/></g>
<g transform="translate(1278.9 249.9)"><circle r="7.6" fill="#343434" opacity="0.55"/><path d="M-6.3 0Q-3.2 -4 0 -4Q3.2 -4 6.3 0Q3.2 4 0 4Q-3.2 4 -6.3 0Z" fill="#ded3dd"/><circle r="2.3" fill="#ded3dd" stroke="#5a565a" stroke-width="1.1"/></g>
<g transform="translate(1278.9 267.9)"><circle r="7.6" fill="#343434" opacity="0.55"/><path d="M-6.3 0Q-3.2 -4 0 -4Q3.2 -4 6.3 0Q3.2 4 0 4Q-3.2 4 -6.3 0Z" fill="#ded3dd"/><circle r="2.3" fill="#ded3dd" stroke="#5a565a" stroke-width="1.1"/></g>
<g transform="translate(1278.9 285.9)"><circle r="7.6" fill="#343434" opacity="0.55"/><path d="M-6.3 0Q-3.2 -4 0 -4Q3.2 -4 6.3 0Q3.2 4 0 4Q-3.2 4 -6.3 0Z" fill="#ded3dd"/><circle r="2.3" fill="#ded3dd" stroke="#5a565a" stroke-width="1.1"/></g>
<g transform="translate(1278.9 303.9)"><circle r="7.6" fill="#343434" opacity="0.55"/><path d="M-6.3 0Q-3.2 -4 0 -4Q3.2 -4 6.3 0Q3.2 4 0 4Q-3.2 4 -6.3 0Z" fill="#ded3dd"/><circle r="2.3" fill="#ded3dd" stroke="#5a565a" stroke-width="1.1"/></g>
<g transform="translate(1278.9 321.9)"><circle r="7.6" fill="#343434" opacity="0.55"/><path d="M-6.3 0Q-3.2 -4 0 -4Q3.2 -4 6.3 0Q3.2 4 0 4Q-3.2 4 -6.3 0Z" fill="#ded3dd"/><circle r="2.3" fill="#ded3dd" stroke="#5a565a" stroke-width="1.1"/></g>
<g transform="translate(1278.9 339.9)"><circle r="7.6" fill="#343434" opacity="0.55"/><path d="M-6.3 0Q-3.2 -4 0 -4Q3.2 -4 6.3 0Q3.2 4 0 4Q-3.2 4 -6.3 0Z" fill="#ded3dd"/><circle r="2.3" fill="#ded3dd" stroke="#5a565a" stroke-width="1.1"/></g>
<g transform="translate(1278.9 357.9)"><circle r="7.6" fill="#343434" opacity="0.55"/><path d="M-6.3 0Q-3.2 -4 0 -4Q3.2 -4 6.3 0Q3.2 4 0 4Q-3.2 4 -6.3 0Z" fill="#ded3dd"/><circle r="2.3" fill="#ded3dd" stroke="#5a565a" stroke-width="1.1"/></g>
<g transform="translate(1278.9 375.9)"><circle r="7.6" fill="#343434" opacity="0.55"/><path d="M-6.3 0Q-3.2 -4 0 -4Q3.2 -4 6.3 0Q3.2 4 0 4Q-3.2 4 -6.3 0Z" fill="#ded3dd"/><circle r="2.3" fill="#ded3dd" stroke="#5a565a" stroke-width="1.1"/></g>
<g transform="translate(1278.9 393.9)"><circle r="7.6" fill="#343434" opacity="0.55"/><path d="M-6.3 0Q-3.2 -4 0 -4Q3.2 -4 6.3 0Q3.2 4 0 4Q-3.2 4 -6.3 0Z" fill="#ded3dd"/><circle r="2.3" fill="#ded3dd" stroke="#5a565a" stroke-width="1.1"/></g>
<g transform="translate(1278.9 411.9)"><circle r="7.6" fill="#343434" opacity="0.55"/><path d="M-6.3 0Q-3.2 -4 0 -4Q3.2 -4 6.3 0Q3.2 4 0 4Q-3.2 4 -6.3 0Z" fill="#ded3dd"/><circle r="2.3" fill="#ded3dd" stroke="#5a565a" stroke-width="1.1"/></g>
<g transform="translate(1278.9 429.9)"><circle r="7.6" fill="#343434" opacity="0.55"/><path d="M-6.3 0Q-3.2 -4 0 -4Q3.2 -4 6.3 0Q3.2 4 0 4Q-3.2 4 -6.3 0Z" fill="#ded3dd"/><circle r="2.3" fill="#ded3dd" stroke="#5a565a" stroke-width="1.1"/></g>
<g transform="translate(1278.9 447.9)"><circle r="7.6" fill="#343434" opacity="0.55"/><path d="M-6.3 0Q-3.2 -4 0 -4Q3.2 -4 6.3 0Q3.2 4 0 4Q-3.2 4 -6.3 0Z" fill="#ded3dd"/><circle r="2.3" fill="#ded3dd" stroke="#5a565a" stroke-width="1.1"/></g>
<g transform="translate(1278.9 465.9)"><circle r="7.6" fill="#343434" opacity="0.55"/><path d="M-6.3 0Q-3.2 -4 0 -4Q3.2 -4 6.3 0Q3.2 4 0 4Q-3.2 4 -6.3 0Z" fill="#ded3dd"/><circle r="2.3" fill="#ded3dd" stroke="#5a565a" stroke-width="1.1"/></g>
<g transform="translate(1278.9 483.9)"><circle r="7.6" fill="#343434" opacity="0.55"/><path d="M-6.3 0Q-3.2 -4 0 -4Q3.2 -4 6.3 0Q3.2 4 0 4Q-3.2 4 -6.3 0Z" fill="#ded3dd"/><circle r="2.3" fill="#ded3dd" stroke="#5a565a" stroke-width="1.1"/></g>
<g transform="translate(1278.9 501.9)"><circle r="7.6" fill="#343434" opacity="0.55"/><path d="M-6.3 0Q-3.2 -4 0 -4Q3.2 -4 6.3 0Q3.2 4 0 4Q-3.2 4 -6.3 0Z" fill="#ded3dd"/><circle r="2.3" fill="#ded3dd" stroke="#5a565a" stroke-width="1.1"/></g>
<path d="M1236.1 735.6L1239 739L1243.7 731.2" fill="none" stroke="#fff" stroke-width="1.9" stroke-linecap="round" stroke-linejoin="round"/>
<path d="M1336.1 735.6L1339 739L1343.7 731.2" fill="none" stroke="#fff" stroke-width="1.9" stroke-linecap="round" stroke-linejoin="round"/>
<path d="M1236.1 751.6L1239 755L1243.7 747.2" fill="none" stroke="#fff" stroke-width="1.9" stroke-linecap="round" stroke-linejoin="round"/>
<path d="M1336.1 751.6L1339 755L1343.7 747.2" fill="none" stroke="#fff" stroke-width="1.9" stroke-linecap="round" stroke-linejoin="round"/>
<path d="M1236.1 767.6L1239 771L1243.7 763.2" fill="none" stroke="#fff" stroke-width="1.9" stroke-linecap="round" stroke-linejoin="round"/>
<path d="M1336.1 767.6L1339 771L1343.7 763.2" fill="none" stroke="#fff" stroke-width="1.9" stroke-linecap="round" stroke-linejoin="round"/>
<path d="M1236.1 783.6L1239 787L1243.7 779.2" fill="none" stroke="#fff" stroke-width="1.9" stroke-linecap="round" stroke-linejoin="round"/>
<path d="M1336.1 783.6L1339 787L1343.7 779.2" fill="none" stroke="#fff" stroke-width="1.9" stroke-linecap="round" stroke-linejoin="round"/>
<path d="M1236.1 799.6L1239 803L1243.7 795.2" fill="none" stroke="#fff" stroke-width="1.9" stroke-linecap="round" stroke-linejoin="round"/>
<path d="M1336.1 799.6L1339 803L1343.7 795.2" fill="none" stroke="#fff" stroke-width="1.9" stroke-linecap="round" stroke-linejoin="round"/>
<path d="M1236.1 815.6L1239 819L1243.7 811.2" fill="none" stroke="#fff" stroke-width="1.9" stroke-linecap="round" stroke-linejoin="round"/>
<path d="M1336.1 815.6L1339 819L1343.7 811.2" fill="none" stroke="#fff" stroke-width="1.9" stroke-linecap="round" stroke-linejoin="round"/>
<circle cx="4" cy="102.8" r="1.6" fill="#ded3dd"/>
<circle cx="10.6" cy="102.8" r="1.6" fill="#ded3dd"/>
<circle cx="17.2" cy="102.8" r="1.6" fill="#ded3dd"/>
<circle cx="23.9" cy="102.8" r="1.6" fill="#ded3dd"/>
<circle cx="4" cy="109.4" r="1.6" fill="#ded3dd"/>
<circle cx="10.6" cy="109.4" r="1.6" fill="#ded3dd"/>
<circle cx="17.2" cy="109.4" r="1.6" fill="#ded3dd"/>
<circle cx="23.9" cy="109.4" r="1.6" fill="#ded3dd"/>
<circle cx="4" cy="116.1" r="1.6" fill="#ded3dd"/>
<circle cx="10.6" cy="116.1" r="1.6" fill="#ded3dd"/>
<circle cx="17.2" cy="116.1" r="1.6" fill="#ded3dd"/>
<circle cx="23.9" cy="116.1" r="1.6" fill="#ded3dd"/>
<circle cx="4" cy="122.8" r="1.6" fill="#ded3dd"/>
<circle cx="10.6" cy="122.8" r="1.6" fill="#ded3dd"/>
<circle cx="17.2" cy="122.8" r="1.6" fill="#ded3dd"/>
<circle cx="23.9" cy="122.8" r="1.6" fill="#ded3dd"/>
<path d="M3.7 136V155.4H23.5" fill="none" stroke="#ded3dd" stroke-width="1"/><path d="M3.7 134L2 138H5.4ZM25.6 155.4L21.6 153.7V157.1Z" fill="#ded3dd"/><path d="M3.7 155.4L22.4 137" stroke="#ded3dd" stroke-width="1"/><path d="M8.6 155.2Q8.8 152.6 7.2 152" fill="none" stroke="#ded3dd" stroke-width="0.8"/><circle cx="23" cy="136.2" r="2.2" fill="#f2647e"/><text x="9.8" y="143.6" font-size="9.5" fill="#ded3dd" text-anchor="middle" font-family="Liberation Sans,sans-serif">r</text><text x="19.2" y="152" font-size="9.5" font-style="italic" fill="#ded3dd" text-anchor="middle" font-family="DejaVu Sans,Liberation Sans,sans-serif">θ</text>
<text x="14" y="177.7" font-size="11.6" fill="#ded3dd" text-anchor="middle" font-family="Liberation Sans,sans-serif" textLength="9.4" lengthAdjust="spacingAndGlyphs" stroke="#ded3dd" stroke-width="0.25">in</text>
<path d="M7 182H21.3" stroke="#ded3dd" stroke-width="1.4"/><path d="M4 182l4.2 -1.9v3.8ZM24.3 182l-4.2 -1.9v3.8Z" fill="#ded3dd"/>
<text x="14" y="210.4" font-size="10.2" fill="#ded3dd" text-anchor="middle" font-family="Liberation Sans,sans-serif" textLength="16.6" lengthAdjust="spacingAndGlyphs" stroke="#ded3dd" stroke-width="0.25">mil</text>
<path d="M7 214.1H21.3" stroke="#ded3dd" stroke-width="1.4"/><path d="M4 214.1l4.2 -1.9v3.8ZM24.3 214.1l-4.2 -1.9v3.8Z" fill="#ded3dd"/>
<text x="14" y="242" font-size="13" fill="#ded3dd" text-anchor="middle" font-family="Liberation Sans,sans-serif" textLength="21.4" lengthAdjust="spacingAndGlyphs" stroke="#ded3dd" stroke-width="0.25">mm</text>
<path d="M7 246H21.3" stroke="#ded3dd" stroke-width="1.4"/><path d="M4 246l4.2 -1.9v3.8ZM24.3 246l-4.2 -1.9v3.8Z" fill="#ded3dd"/>
<path d="M2 273.7H26M14.1 261.5V279" stroke="#8d8a8d" stroke-width="0.9"/><path d="M9.2 273.7H19M14.1 268.8V278.6" stroke="#42b8eb" stroke-width="2.6" stroke-linecap="round"/>
<path d="M14.3 273.6L14.3 284.09L16.79 281.86L18.6 285.9L20.49 285.04L18.69 281.17L22.04 281.17Z" fill="#ded3dd"/>
<path d="M5.9 303V325M3 322.2H25" stroke="#ded3dd" stroke-width="1.7" fill="none"/><path d="M3.7 324.4L21.4 306.8" stroke="#ded3dd" stroke-width="1.5"/><path d="M5.9 315H13V322.2" fill="none" stroke="#ded3dd" stroke-width="1"/>
<path d="M6.8 348.8L20.5 360.7M19.9 350.4L7.7 362.2M6.8 348.8L19.9 350.4L25.9 351.6" stroke="#fff" stroke-width="0.9" fill="none"/>
<circle cx="6.8" cy="348.8" r="2.6" fill="#fff"/>
<circle cx="19.9" cy="350.4" r="2.6" fill="#fff"/>
<circle cx="7.7" cy="362.2" r="2.6" fill="#fff"/>
<circle cx="20.5" cy="360.7" r="2.6" fill="#fff"/>
<path d="M14.9 377.8L4.7 388.1M1.9 398.3L25.9 375.3" stroke="#ded3dd" stroke-width="0.9" fill="none"/><path d="M23 385.3Q21.5 394.6 11.8 396.1" stroke="#ded3dd" stroke-width="0.9" fill="none"/>
<circle cx="14.9" cy="377.8" r="2.4" fill="#ded3dd"/>
<circle cx="4.7" cy="388.1" r="2.4" fill="#ded3dd"/>
<circle cx="23" cy="385.3" r="2.4" fill="#ded3dd"/>
<circle cx="11.8" cy="396.1" r="2.4" fill="#ded3dd"/>
<g fill="none" stroke-width="1.5"><path d="M2.2 417.8L10.6 426" stroke="#d4d0d4"/><path d="M2.2 429.5L7.2 434H16.2L22.4 439.6" stroke="#d4d0d4"/><path d="M7.4 416.2L12.8 421.1H17.6L25.4 429.4" stroke="#f2647e"/><path d="M15.4 427.9L25.4 436.8" stroke="#f2647e"/></g><circle cx="12" cy="427.9" r="2.8" fill="#fff" stroke="#f79a1d" stroke-width="1.4"/>
<g fill="none" stroke-width="1.5"><path d="M2 451.7H10.8L16.8 457.6V471.4" stroke="#777"/><path d="M15 448.3L21.8 454.6V471.4" stroke="#777"/><path d="M11.6 459.5H25.9" stroke="#3e7f9c" stroke-width="2.6"/><path d="M8.4 462.6V471.4" stroke="#a55c69" stroke-width="2.6"/></g><circle cx="8.4" cy="459.5" r="2.5" fill="#777" stroke="#a8742a" stroke-width="1.3"/>
<path d="M10.2 491.4H24.2V510.9H4.1V501.4H10.2Z" fill="#1e8ed2" stroke="#42b8eb" stroke-width="0.9"/><path d="M24.7 496.9H18.4A3.6 3.6 0 1 0 18.4 504H24.7Z" fill="#141d30"/><circle cx="18.2" cy="500.4" r="2" fill="#ded3dd"/><path d="M18.2 500.4H24.4" stroke="#ded3dd" stroke-width="1.5"/>
<path d="M10.6 523.5H23.7V542.4H4.4V533.7H10.6Z" fill="none" stroke="#42b8eb" stroke-width="1.1" stroke-dasharray="2.3 1.6"/><circle cx="18.9" cy="531.8" r="2.1" fill="#ded3dd"/><path d="M18.9 531.8H23.7" stroke="#ded3dd" stroke-width="1.4"/>
<path d="M2.3 565.4H25.5V582.9H2.3V577Q5 576.8 5 574.2Q5 571.6 2.3 571.4Z" fill="none" stroke="#ded3dd" stroke-width="1.1"/>
<rect x="5.6" y="562.3" width="4.3" height="6.2" fill="#42b8eb"/>
<rect x="6.05" y="579.6" width="3.4" height="5.6" fill="#323232" stroke="#42b8eb" stroke-width="0.9"/>
<rect x="12.3" y="562.3" width="4.3" height="6.2" fill="#42b8eb"/>
<rect x="12.75" y="579.6" width="3.4" height="5.6" fill="#323232" stroke="#42b8eb" stroke-width="0.9"/>
<rect x="19.3" y="562.3" width="4.3" height="6.2" fill="#42b8eb"/>
<rect x="19.75" y="579.6" width="3.4" height="5.6" fill="#323232" stroke="#42b8eb" stroke-width="0.9"/>
<path d="M1.9 585.6L25.9 562.1" stroke="#ded3dd" stroke-width="1"/>
<circle cx="13.7" cy="606.5" r="9.2" fill="none" stroke="#8a878a" stroke-width="0.9"/><circle cx="13.7" cy="606.5" r="5.8" fill="none" stroke="#8a878a" stroke-width="0.9"/><circle cx="13.7" cy="606.5" r="3.2" fill="none" stroke="#8a878a" stroke-width="0.9"/><path d="M7.0 613.0A9.4 9.4 0 0 1 20.4 599.9L16.8 603.4A4.4 4.4 0 0 0 10.6 609.6Z" fill="#f79a1d"/><path d="M1.9 617.8L25.9 594.1" stroke="#ded3dd" stroke-width="1"/>
<rect x="12.2" y="626.2" width="4" height="23.8" rx="2" fill="none" stroke="#f2647e" stroke-width="0.9"/><path d="M14.2 626.2A2 2 0 0 0 12.2 628.2V648A2 2 0 0 0 14.2 650Z" fill="#f2647e"/><rect x="2" y="635.7" width="24" height="4.6" rx="2.3" fill="none" stroke="#42b8eb" stroke-width="0.9"/><path d="M14 635.7H4.3A2.3 2.3 0 0 0 4.3 640.3H11Z" fill="#42b8eb"/><path d="M1.9 650L25.9 626.2" stroke="#ded3dd" stroke-width="1"/>
<path d="M13.9 691.5L4.9 684.2L13.9 677L22.9 684.2Z" fill="#f79a1d"/><path d="M13.9 687.4L4.9 680.1L13.9 672.9L22.9 680.1Z" fill="#e4dde3"/><path d="M13.9 682.8L4.9 675.5L13.9 668.2L22.9 675.5Z" fill="#42b8eb"/>
<path d="M6.2 705.4L21.8 719.4" stroke="#42b8eb" stroke-width="3.2" stroke-linecap="round"/><circle cx="6.4" cy="705.6" r="3.9" fill="#42b8eb"/><path d="M6.6 705.4L2 701.4L6.4 700Z" fill="#323232"/><circle cx="21.6" cy="719.2" r="1" fill="#323232"/><path d="M3.6 721.6L14 711" stroke="#ded3dd" stroke-width="1.2" stroke-linecap="round"/><path d="M15.6 709.4L22 702.8" stroke="#ded3dd" stroke-width="4" stroke-linecap="round"/>
<path d="M1199.2 105.2L1199.2 117.4L1202.1 114.8L1204.2 119.5L1206.4 118.5L1204.3 114L1208.2 114Z" fill="#ded3dd"/>
<path d="M1194 133.5L1215.7 155.5M1215.7 134.8L1194 156.2" stroke="#ded3dd" stroke-width="0.9"/><circle cx="1203.9" cy="145" r="2.7" fill="#fff"/>
<path d="M1192.2 177H1216V194.1H1192.2V188.2Q1194.9 188 1194.9 185.5Q1194.9 183 1192.2 182.8Z" fill="none" stroke="#ded3dd" stroke-width="1.1"/>
<rect x="1195.2" y="174.2" width="4.8" height="6.5" fill="#42b8eb"/><rect x="1195.2" y="191" width="4.8" height="6.5" fill="#42b8eb"/>
<rect x="1202.1" y="174.2" width="4.8" height="6.5" fill="#42b8eb"/><rect x="1202.1" y="191" width="4.8" height="6.5" fill="#42b8eb"/>
<rect x="1209.2" y="174.2" width="4.8" height="6.5" fill="#42b8eb"/><rect x="1209.2" y="191" width="4.8" height="6.5" fill="#42b8eb"/>
<path d="M1193.7 228.6L1198.9 217.8H1209.9L1214.5 207.2" fill="none" stroke="#42b8eb" stroke-width="1.6" stroke-linecap="round" stroke-linejoin="round"/>
<path d="M1218.8 226.1V232.9H1212Z" fill="#f0f0f0"/>
<path d="M1218.8 257.9V264.7H1212Z" fill="#f0f0f0"/>
<path d="M1218.8 651V657.8H1212Z" fill="#f0f0f0"/>
<path d="M1218.8 724V730.8H1212Z" fill="#f0f0f0"/>
<path d="M1192.2 250.6Q1193.6 250.2 1194 252.6Q1194.6 256.4 1196.6 256.4Q1198.6 256.4 1198.6 252.8V248Q1198.6 244.2 1200.9 244.2Q1203.2 244.2 1203.2 248V250.6Q1203.2 252.8 1204.7 252.8Q1206.2 252.8 1206.2 250.6V248Q1206.2 244.2 1208.5 244.2Q1210.8 244.2 1210.8 248V250.6Q1210.8 252.8 1212.6 252.8Q1214.4 252.8 1215.6 250.2" fill="none" stroke="#42b8eb" stroke-width="1.9" stroke-linecap="round"/>
<circle cx="1203.9" cy="282.1" r="5" fill="#dcdcdc" stroke="#f79a1d" stroke-width="3.8"/>
<path d="M1200.2 304.1H1213.9V323.6H1193.9V314H1200.2Z" fill="#42b8eb"/><path d="M1214.2 309.3H1208.2A3.5 3.5 0 1 0 1208.2 316.3H1214.2Z" fill="#323232"/><circle cx="1208.1" cy="312.8" r="2" fill="#ded3dd"/><path d="M1208.1 312.8H1213.9" stroke="#ded3dd" stroke-width="1.5"/>
<defs><clipPath id="ra"><path d="M1200.2 336H1213.8V355.7H1193.9V346H1200.2Z"/></clipPath></defs><path d="M1200.2 336H1213.8V355.7H1193.9V346H1200.2Z" fill="#ded3dd"/><g clip-path="url(#ra)" stroke="#1e1e1e" stroke-width="1.9"><path d="M1178 330L1208 360"/><path d="M1183.3 330L1213.3 360"/><path d="M1188.6 330L1218.6 360"/><path d="M1193.9 330L1223.9 360"/><path d="M1199.2 330L1229.2 360"/><path d="M1204.5 330L1234.5 360"/><path d="M1209.8 330L1239.8 360"/><path d="M1215.1 330L1245.1 360"/><path d="M1220.4 330L1250.4 360"/></g><path d="M1200.2 336H1213.8V355.7H1193.9V346H1200.2Z" fill="none" stroke="#ded3dd" stroke-width="0.9"/>
<path d="M1194.6 396.1L1213.8 377.4" stroke="#ded3dd" stroke-width="1.8" stroke-linecap="round"/>
<path d="M1194.6 428.4A19.2 19.2 0 0 1 1213.6 409.8" fill="none" stroke="#ded3dd" stroke-width="1.8" stroke-linecap="round"/>
<rect x="1194.9" y="443" width="18.2" height="15.8" fill="#8e8e8e" stroke="#ded3dd" stroke-width="1.4"/>
<circle cx="1203.9" cy="483.1" r="9.1" fill="#8e8e8e" stroke="#ded3dd" stroke-width="1.4"/>
<path d="M1194.8 506.2L1213.2 508.8L1212.3 519.8L1196.6 524L1203.6 516.4Z" fill="#8e8e8e" stroke="#ded3dd" stroke-width="1.3" stroke-linejoin="round"/>
<rect x="1193" y="536" width="21.8" height="21.9" rx="3" fill="#ded3dd"/><path d="M1195.2 554.4L1200.2 545.2L1205.4 552L1208.8 549.4L1212.8 554.4Z" fill="#4e4e4e"/><circle cx="1207.4" cy="541.4" r="2.4" fill="#4e4e4e"/>
<path d="M1195.8 569.1H1212V572.2H1206.1V589H1201.8V572.2H1195.8Z" fill="#ded3dd"/>
<rect x="1193.9" y="602.2" width="19.9" height="17.4" fill="#747474"/><rect x="1195.7" y="604" width="16.3" height="13.8" fill="#bdbdbd"/><path d="M1198.3 607.5H1209.5M1198.3 610.7H1207.6M1198.3 613.8H1209.5" stroke="#555" stroke-width="0.9"/>
<path d="M1195.4 645.2L1206.6 634.2M1206.1 631L1210.7 635.8M1192.1 645.1L1196.4 649.7" stroke="#ded3dd" stroke-width="0.9"/><path d="M1194.9 645.7L1196.4 642L1198.5 644.2ZM1207 633.8L1205.6 637.4L1203.4 635.2Z" fill="#ded3dd"/><circle cx="1213.2" cy="637.9" r="2.8" fill="#42b8eb"/><circle cx="1198.9" cy="652.2" r="2.8" fill="#42b8eb"/>
<path d="M1195.8 664.4L1195.8 677.21L1198.85 674.48L1201.05 679.41L1203.36 678.37L1201.15 673.64L1205.25 673.64Z" fill="#ded3dd"/>
<circle cx="1208.9" cy="680.2" r="6.8" fill="#f2647e"/><path d="M1206.2 677.5L1211.6 682.9M1211.6 677.5L1206.2 682.9" stroke="#fff" stroke-width="1.9"/>
<circle cx="1206.1" cy="713.9" r="4.6" fill="#868686"/><path d="M1199.3 713.9H1212.9M1206.1 707.1V720.7" stroke="#ded3dd" stroke-width="2"/><path d="M1194.6 707V725.4H1213" fill="none" stroke="#ded3dd" stroke-width="1"/><path d="M1194.6 705.2L1193 709H1196.2ZM1214.8 725.4L1211 723.8V727Z" fill="#ded3dd"/>
<g transform="translate(1203.9 747.9) rotate(-44.5)"><rect x="-11.3" y="-4" width="22.6" height="8" fill="none" stroke="#ded3dd" stroke-width="1.7"/><path d="M-6.6 4V1M-2.2 4V0M2.2 4V1M6.6 4V0" stroke="#ded3dd" stroke-width="1"/></g>
</svg>
</div></body></html>
